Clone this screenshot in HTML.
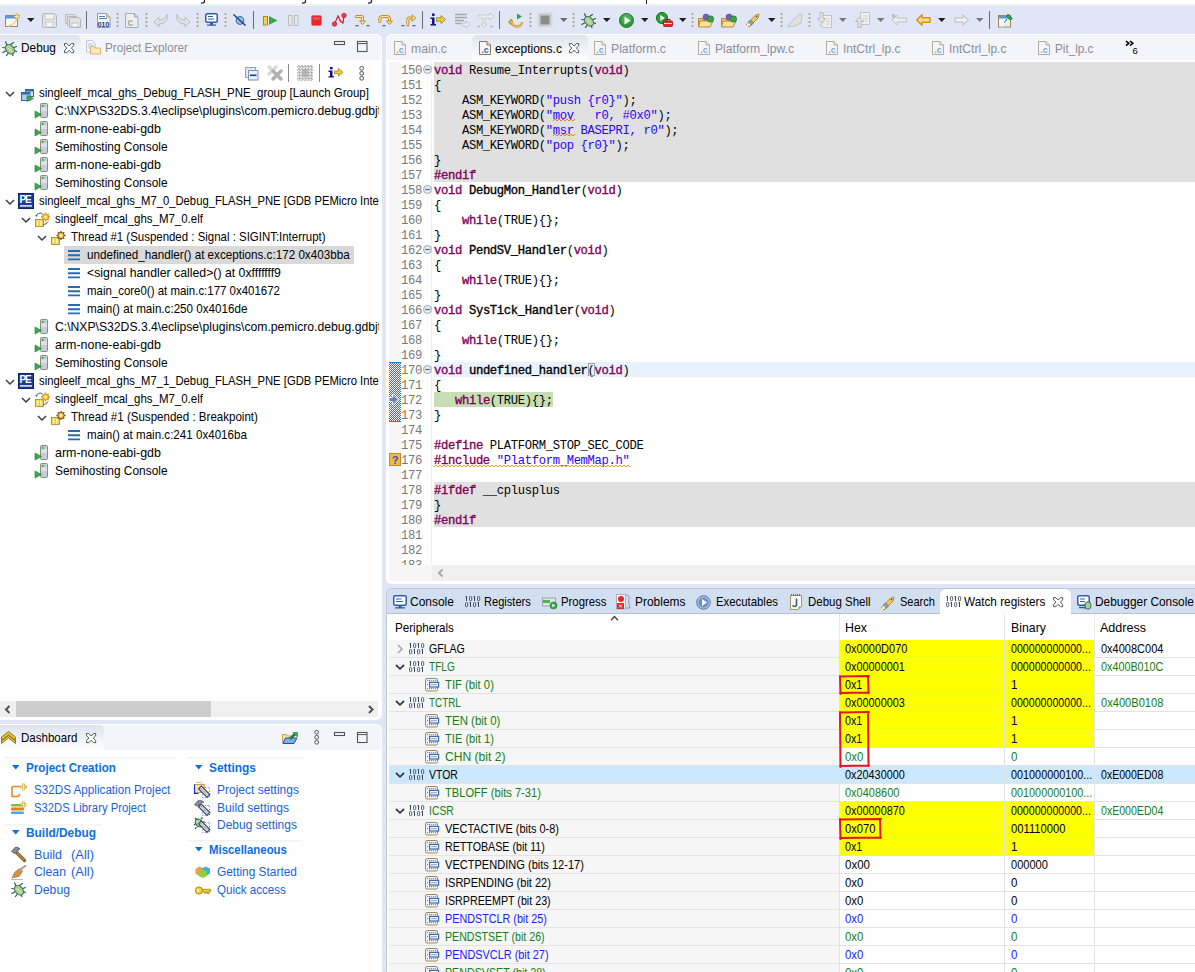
<!DOCTYPE html>
<html><head><meta charset="utf-8"><style>
html,body{margin:0;padding:0}
body{width:1195px;height:972px;overflow:hidden;position:relative;background:#e1e6f6;font-family:"Liberation Sans", sans-serif;}
.t{position:absolute;white-space:pre;line-height:18px;height:18px}
.m{font-family:"Liberation Mono", monospace;}
svg{overflow:visible}
</style></head><body>
<div style="position:absolute;left:0px;top:0px;width:1195px;height:4px;background:#fff"></div><div style="position:absolute;left:0px;top:4px;width:1195px;height:2px;background:#f0f0f0"></div><div style="position:absolute;left:0px;top:34px;width:382px;height:686px;background:#fff;border-radius:0 6px 6px 0"></div><div style="position:absolute;left:0px;top:35px;width:381px;height:25px;background:#f3f5fb;border-radius:0 5px 0 0"></div><div style="position:absolute;left:0px;top:35px;width:81px;height:25px;background:linear-gradient(#dde4ef,#fff);border-radius:0 5px 0 0"></div><div style="position:absolute;left:0px;top:701px;width:378px;height:16px;background:#f0f0f0"></div><div style="position:absolute;left:16px;top:701px;width:195px;height:16px;background:#cdcdcd"></div><div style="position:absolute;left:0px;top:724px;width:382px;height:248px;background:#fff;border-radius:0 6px 0 0"></div><div style="position:absolute;left:0px;top:725px;width:381px;height:25px;background:#f3f5fb;border-radius:0 5px 0 0"></div><div style="position:absolute;left:0px;top:725px;width:104px;height:25px;background:linear-gradient(#dde4ef,#fff);border-radius:0 5px 0 0"></div><div style="position:absolute;left:386px;top:34px;width:809px;height:550px;background:#fff;border-radius:6px 0 0 6px"></div><div style="position:absolute;left:387px;top:35px;width:808px;height:25px;background:#f3f5fb;border-radius:5px 0 0 0"></div><div style="position:absolute;left:472px;top:35px;width:116px;height:25px;background:linear-gradient(#dde4ef,#fff);border-radius:5px 5px 0 0"></div><div style="position:absolute;left:389px;top:62px;width:12px;height:519px;background:#f6f6f6"></div><div style="position:absolute;left:389px;top:565px;width:43px;height:16px;background:#f6f6f6"></div><div style="position:absolute;left:431px;top:62px;width:1px;height:503px;background:#efefef"></div><div style="position:absolute;left:434px;top:62px;width:761px;height:120px;background:#e0e0e0"></div><div style="position:absolute;left:434px;top:482px;width:761px;height:45px;background:#e0e0e0"></div><div style="position:absolute;left:434px;top:362px;width:761px;height:15px;background:#e8f2fe"></div><div style="position:absolute;left:434px;top:392px;width:119px;height:15px;background:#c7ddb3"></div><div style="position:absolute;left:432px;top:565px;width:763px;height:16px;background:#f0f0f0"></div><div style="position:absolute;left:386px;top:588px;width:809px;height:384px;background:#fff;border:1px solid #c0c6d2;border-right:none;border-bottom:none;border-radius:6px 0 0 0;box-sizing:border-box"></div><div style="position:absolute;left:387px;top:589px;width:808px;height:24px;background:#d2dff0;border-radius:5px 0 0 0"></div><div style="position:absolute;left:387px;top:613px;width:808px;height:1px;background:#b4c0d4"></div><div style="position:absolute;left:940px;top:589px;width:131px;height:25px;background:#fff;border-radius:6px 6px 0 0"></div><div style="position:absolute;left:0;top:84px;width:379px;height:400px;overflow:hidden"><div class="t" style="left:39px;top:0px;font-size:12.8px;color:#000;transform:scaleX(0.8987);transform-origin:0 0;">singleelf_mcal_ghs_Debug_FLASH_PNE_group [Launch Group]</div><div class="t" style="left:55px;top:18px;font-size:12.8px;color:#000;transform:scaleX(0.951);transform-origin:0 0">C:\NXP\S32DS.3.4\eclipse\plugins\com.pemicro.debug.gdbjtag.pne_4.7.2</div><div class="t" style="left:55px;top:36px;font-size:12.8px;color:#000;transform:scaleX(0.9737);transform-origin:0 0;">arm-none-eabi-gdb</div><div class="t" style="left:55px;top:54px;font-size:12.8px;color:#000;transform:scaleX(0.9306);transform-origin:0 0;">Semihosting Console</div><div class="t" style="left:55px;top:72px;font-size:12.8px;color:#000;transform:scaleX(0.9737);transform-origin:0 0;">arm-none-eabi-gdb</div><div class="t" style="left:55px;top:90px;font-size:12.8px;color:#000;transform:scaleX(0.9306);transform-origin:0 0;">Semihosting Console</div><div class="t" style="left:39px;top:108px;font-size:12.8px;color:#000;transform:scaleX(0.88);transform-origin:0 0">singleelf_mcal_ghs_M7_0_Debug_FLASH_PNE [GDB PEMicro Interface Debugging]</div><div class="t" style="left:55px;top:126px;font-size:12.8px;color:#000;transform:scaleX(0.8962);transform-origin:0 0;">singleelf_mcal_ghs_M7_0.elf</div><div class="t" style="left:71px;top:144px;font-size:12.8px;color:#000;transform:scaleX(0.8945);transform-origin:0 0;">Thread #1 (Suspended : Signal : SIGINT:Interrupt)</div><div style="position:absolute;left:64px;top:162px;width:290px;height:18px;background:#d9d9d9"></div><div class="t" style="left:87px;top:162px;font-size:12.8px;color:#000;transform:scaleX(0.9114);transform-origin:0 0;">undefined_handler() at exceptions.c:172 0x403bba</div><div class="t" style="left:87px;top:180px;font-size:12.8px;color:#000;transform:scaleX(0.9599);transform-origin:0 0;">&lt;signal handler called&gt;() at 0xfffffff9</div><div class="t" style="left:87px;top:198px;font-size:12.8px;color:#000;transform:scaleX(0.8949);transform-origin:0 0;">main_core0() at main.c:177 0x401672</div><div class="t" style="left:87px;top:216px;font-size:12.8px;color:#000;transform:scaleX(0.9093);transform-origin:0 0;">main() at main.c:250 0x4016de</div><div class="t" style="left:55px;top:234px;font-size:12.8px;color:#000;transform:scaleX(0.951);transform-origin:0 0">C:\NXP\S32DS.3.4\eclipse\plugins\com.pemicro.debug.gdbjtag.pne_4.7.2</div><div class="t" style="left:55px;top:252px;font-size:12.8px;color:#000;transform:scaleX(0.9737);transform-origin:0 0;">arm-none-eabi-gdb</div><div class="t" style="left:55px;top:270px;font-size:12.8px;color:#000;transform:scaleX(0.9306);transform-origin:0 0;">Semihosting Console</div><div class="t" style="left:39px;top:288px;font-size:12.8px;color:#000;transform:scaleX(0.88);transform-origin:0 0">singleelf_mcal_ghs_M7_1_Debug_FLASH_PNE [GDB PEMicro Interface Debugging]</div><div class="t" style="left:55px;top:306px;font-size:12.8px;color:#000;transform:scaleX(0.8962);transform-origin:0 0;">singleelf_mcal_ghs_M7_0.elf</div><div class="t" style="left:71px;top:324px;font-size:12.8px;color:#000;transform:scaleX(0.9029);transform-origin:0 0;">Thread #1 (Suspended : Breakpoint)</div><div class="t" style="left:87px;top:342px;font-size:12.8px;color:#000;transform:scaleX(0.9064);transform-origin:0 0;">main() at main.c:241 0x4016ba</div><div class="t" style="left:55px;top:360px;font-size:12.8px;color:#000;transform:scaleX(0.9737);transform-origin:0 0;">arm-none-eabi-gdb</div><div class="t" style="left:55px;top:378px;font-size:12.8px;color:#000;transform:scaleX(0.9306);transform-origin:0 0;">Semihosting Console</div></div><div style="position:absolute;left:386px;top:62px;width:809px;height:503px;overflow:hidden"><div class="t m" style="left:6px;top:1.5px;width:30px;text-align:right;line-height:15px;height:15px;font-size:12.2px;letter-spacing:-0.33px;color:#787878">150</div><div class="t m" style="left:48px;top:1.5px;line-height:15px;height:15px;font-size:12.2px;letter-spacing:-0.333px;color:#000"><span style="color:#7f0055;-webkit-text-stroke:0.35px #7f0055">void</span><span style=""> </span><span style="">Resume_Interrupts</span><span style="">(</span><span style="color:#7f0055;-webkit-text-stroke:0.35px #7f0055">void</span><span style="">)</span></div><div class="t m" style="left:6px;top:16.5px;width:30px;text-align:right;line-height:15px;height:15px;font-size:12.2px;letter-spacing:-0.33px;color:#787878">151</div><div class="t m" style="left:48px;top:16.5px;line-height:15px;height:15px;font-size:12.2px;letter-spacing:-0.333px;color:#000"><span style="">{</span></div><div class="t m" style="left:6px;top:31.5px;width:30px;text-align:right;line-height:15px;height:15px;font-size:12.2px;letter-spacing:-0.33px;color:#787878">152</div><div class="t m" style="left:48px;top:31.5px;line-height:15px;height:15px;font-size:12.2px;letter-spacing:-0.333px;color:#000"><span style="">    ASM_KEYWORD(</span><span style="color:#2a00ff">&quot;push {r0}&quot;</span><span style="">);</span></div><div class="t m" style="left:6px;top:46.5px;width:30px;text-align:right;line-height:15px;height:15px;font-size:12.2px;letter-spacing:-0.33px;color:#787878">153</div><div class="t m" style="left:48px;top:46.5px;line-height:15px;height:15px;font-size:12.2px;letter-spacing:-0.333px;color:#000"><span style="">    ASM_KEYWORD(</span><span style="color:#2a00ff">&quot;mov   r0, #0x0&quot;</span><span style="">);</span></div><div class="t m" style="left:6px;top:61.5px;width:30px;text-align:right;line-height:15px;height:15px;font-size:12.2px;letter-spacing:-0.33px;color:#787878">154</div><div class="t m" style="left:48px;top:61.5px;line-height:15px;height:15px;font-size:12.2px;letter-spacing:-0.333px;color:#000"><span style="">    ASM_KEYWORD(</span><span style="color:#2a00ff">&quot;msr BASEPRI, r0&quot;</span><span style="">);</span></div><div class="t m" style="left:6px;top:76.5px;width:30px;text-align:right;line-height:15px;height:15px;font-size:12.2px;letter-spacing:-0.33px;color:#787878">155</div><div class="t m" style="left:48px;top:76.5px;line-height:15px;height:15px;font-size:12.2px;letter-spacing:-0.333px;color:#000"><span style="">    ASM_KEYWORD(</span><span style="color:#2a00ff">&quot;pop {r0}&quot;</span><span style="">);</span></div><div class="t m" style="left:6px;top:91.5px;width:30px;text-align:right;line-height:15px;height:15px;font-size:12.2px;letter-spacing:-0.33px;color:#787878">156</div><div class="t m" style="left:48px;top:91.5px;line-height:15px;height:15px;font-size:12.2px;letter-spacing:-0.333px;color:#000"><span style="">}</span></div><div class="t m" style="left:6px;top:106.5px;width:30px;text-align:right;line-height:15px;height:15px;font-size:12.2px;letter-spacing:-0.33px;color:#787878">157</div><div class="t m" style="left:48px;top:106.5px;line-height:15px;height:15px;font-size:12.2px;letter-spacing:-0.333px;color:#000"><span style="color:#7f0055;-webkit-text-stroke:0.35px #7f0055">#endif</span></div><div class="t m" style="left:6px;top:121.5px;width:30px;text-align:right;line-height:15px;height:15px;font-size:12.2px;letter-spacing:-0.33px;color:#787878">158</div><div class="t m" style="left:48px;top:121.5px;line-height:15px;height:15px;font-size:12.2px;letter-spacing:-0.333px;color:#000"><span style="color:#7f0055;-webkit-text-stroke:0.35px #7f0055">void</span><span style=""> </span><span style="-webkit-text-stroke:0.35px #000">DebugMon_Handler</span><span style="">(</span><span style="color:#7f0055;-webkit-text-stroke:0.35px #7f0055">void</span><span style="">)</span></div><div class="t m" style="left:6px;top:136.5px;width:30px;text-align:right;line-height:15px;height:15px;font-size:12.2px;letter-spacing:-0.33px;color:#787878">159</div><div class="t m" style="left:48px;top:136.5px;line-height:15px;height:15px;font-size:12.2px;letter-spacing:-0.333px;color:#000"><span style="">{</span></div><div class="t m" style="left:6px;top:151.5px;width:30px;text-align:right;line-height:15px;height:15px;font-size:12.2px;letter-spacing:-0.33px;color:#787878">160</div><div class="t m" style="left:48px;top:151.5px;line-height:15px;height:15px;font-size:12.2px;letter-spacing:-0.333px;color:#000"><span style="">    </span><span style="color:#7f0055;-webkit-text-stroke:0.35px #7f0055">while</span><span style="">(TRUE){};</span></div><div class="t m" style="left:6px;top:166.5px;width:30px;text-align:right;line-height:15px;height:15px;font-size:12.2px;letter-spacing:-0.33px;color:#787878">161</div><div class="t m" style="left:48px;top:166.5px;line-height:15px;height:15px;font-size:12.2px;letter-spacing:-0.333px;color:#000"><span style="">}</span></div><div class="t m" style="left:6px;top:181.5px;width:30px;text-align:right;line-height:15px;height:15px;font-size:12.2px;letter-spacing:-0.33px;color:#787878">162</div><div class="t m" style="left:48px;top:181.5px;line-height:15px;height:15px;font-size:12.2px;letter-spacing:-0.333px;color:#000"><span style="color:#7f0055;-webkit-text-stroke:0.35px #7f0055">void</span><span style=""> </span><span style="-webkit-text-stroke:0.35px #000">PendSV_Handler</span><span style="">(</span><span style="color:#7f0055;-webkit-text-stroke:0.35px #7f0055">void</span><span style="">)</span></div><div class="t m" style="left:6px;top:196.5px;width:30px;text-align:right;line-height:15px;height:15px;font-size:12.2px;letter-spacing:-0.33px;color:#787878">163</div><div class="t m" style="left:48px;top:196.5px;line-height:15px;height:15px;font-size:12.2px;letter-spacing:-0.333px;color:#000"><span style="">{</span></div><div class="t m" style="left:6px;top:211.5px;width:30px;text-align:right;line-height:15px;height:15px;font-size:12.2px;letter-spacing:-0.33px;color:#787878">164</div><div class="t m" style="left:48px;top:211.5px;line-height:15px;height:15px;font-size:12.2px;letter-spacing:-0.333px;color:#000"><span style="">    </span><span style="color:#7f0055;-webkit-text-stroke:0.35px #7f0055">while</span><span style="">(TRUE){};</span></div><div class="t m" style="left:6px;top:226.5px;width:30px;text-align:right;line-height:15px;height:15px;font-size:12.2px;letter-spacing:-0.33px;color:#787878">165</div><div class="t m" style="left:48px;top:226.5px;line-height:15px;height:15px;font-size:12.2px;letter-spacing:-0.333px;color:#000"><span style="">}</span></div><div class="t m" style="left:6px;top:241.5px;width:30px;text-align:right;line-height:15px;height:15px;font-size:12.2px;letter-spacing:-0.33px;color:#787878">166</div><div class="t m" style="left:48px;top:241.5px;line-height:15px;height:15px;font-size:12.2px;letter-spacing:-0.333px;color:#000"><span style="color:#7f0055;-webkit-text-stroke:0.35px #7f0055">void</span><span style=""> </span><span style="-webkit-text-stroke:0.35px #000">SysTick_Handler</span><span style="">(</span><span style="color:#7f0055;-webkit-text-stroke:0.35px #7f0055">void</span><span style="">)</span></div><div class="t m" style="left:6px;top:256.5px;width:30px;text-align:right;line-height:15px;height:15px;font-size:12.2px;letter-spacing:-0.33px;color:#787878">167</div><div class="t m" style="left:48px;top:256.5px;line-height:15px;height:15px;font-size:12.2px;letter-spacing:-0.333px;color:#000"><span style="">{</span></div><div class="t m" style="left:6px;top:271.5px;width:30px;text-align:right;line-height:15px;height:15px;font-size:12.2px;letter-spacing:-0.33px;color:#787878">168</div><div class="t m" style="left:48px;top:271.5px;line-height:15px;height:15px;font-size:12.2px;letter-spacing:-0.333px;color:#000"><span style="">    </span><span style="color:#7f0055;-webkit-text-stroke:0.35px #7f0055">while</span><span style="">(TRUE){};</span></div><div class="t m" style="left:6px;top:286.5px;width:30px;text-align:right;line-height:15px;height:15px;font-size:12.2px;letter-spacing:-0.33px;color:#787878">169</div><div class="t m" style="left:48px;top:286.5px;line-height:15px;height:15px;font-size:12.2px;letter-spacing:-0.333px;color:#000"><span style="">}</span></div><div class="t m" style="left:6px;top:301.5px;width:30px;text-align:right;line-height:15px;height:15px;font-size:12.2px;letter-spacing:-0.33px;color:#787878">170</div><div class="t m" style="left:48px;top:301.5px;line-height:15px;height:15px;font-size:12.2px;letter-spacing:-0.333px;color:#000"><span style="color:#7f0055;-webkit-text-stroke:0.35px #7f0055">void</span><span style=""> </span><span style="-webkit-text-stroke:0.35px #000">undefined_handler</span><span style="">(</span><span style="color:#7f0055;-webkit-text-stroke:0.35px #7f0055">void</span><span style="">)</span></div><div class="t m" style="left:6px;top:316.5px;width:30px;text-align:right;line-height:15px;height:15px;font-size:12.2px;letter-spacing:-0.33px;color:#787878">171</div><div class="t m" style="left:48px;top:316.5px;line-height:15px;height:15px;font-size:12.2px;letter-spacing:-0.333px;color:#000"><span style="">{</span></div><div class="t m" style="left:6px;top:331.5px;width:30px;text-align:right;line-height:15px;height:15px;font-size:12.2px;letter-spacing:-0.33px;color:#787878">172</div><div class="t m" style="left:48px;top:331.5px;line-height:15px;height:15px;font-size:12.2px;letter-spacing:-0.333px;color:#000"><span style="">   </span><span style="color:#7f0055;-webkit-text-stroke:0.35px #7f0055">while</span><span style="">(TRUE){};</span></div><div class="t m" style="left:6px;top:346.5px;width:30px;text-align:right;line-height:15px;height:15px;font-size:12.2px;letter-spacing:-0.33px;color:#787878">173</div><div class="t m" style="left:48px;top:346.5px;line-height:15px;height:15px;font-size:12.2px;letter-spacing:-0.333px;color:#000"><span style="">}</span></div><div class="t m" style="left:6px;top:361.5px;width:30px;text-align:right;line-height:15px;height:15px;font-size:12.2px;letter-spacing:-0.33px;color:#787878">174</div><div class="t m" style="left:48px;top:361.5px;line-height:15px;height:15px;font-size:12.2px;letter-spacing:-0.333px;color:#000"></div><div class="t m" style="left:6px;top:376.5px;width:30px;text-align:right;line-height:15px;height:15px;font-size:12.2px;letter-spacing:-0.33px;color:#787878">175</div><div class="t m" style="left:48px;top:376.5px;line-height:15px;height:15px;font-size:12.2px;letter-spacing:-0.333px;color:#000"><span style="color:#7f0055;-webkit-text-stroke:0.35px #7f0055">#define</span><span style=""> PLATFORM_STOP_SEC_CODE</span></div><div class="t m" style="left:6px;top:391.5px;width:30px;text-align:right;line-height:15px;height:15px;font-size:12.2px;letter-spacing:-0.33px;color:#787878">176</div><div class="t m" style="left:48px;top:391.5px;line-height:15px;height:15px;font-size:12.2px;letter-spacing:-0.333px;color:#000"><span style="color:#7f0055;-webkit-text-stroke:0.35px #7f0055">#include</span><span style=""> </span><span style="color:#2a00ff">&quot;Platform_MemMap.h&quot;</span></div><div class="t m" style="left:6px;top:406.5px;width:30px;text-align:right;line-height:15px;height:15px;font-size:12.2px;letter-spacing:-0.33px;color:#787878">177</div><div class="t m" style="left:48px;top:406.5px;line-height:15px;height:15px;font-size:12.2px;letter-spacing:-0.333px;color:#000"></div><div class="t m" style="left:6px;top:421.5px;width:30px;text-align:right;line-height:15px;height:15px;font-size:12.2px;letter-spacing:-0.33px;color:#787878">178</div><div class="t m" style="left:48px;top:421.5px;line-height:15px;height:15px;font-size:12.2px;letter-spacing:-0.333px;color:#000"><span style="color:#7f0055;-webkit-text-stroke:0.35px #7f0055">#ifdef</span><span style=""> __cplusplus</span></div><div class="t m" style="left:6px;top:436.5px;width:30px;text-align:right;line-height:15px;height:15px;font-size:12.2px;letter-spacing:-0.33px;color:#787878">179</div><div class="t m" style="left:48px;top:436.5px;line-height:15px;height:15px;font-size:12.2px;letter-spacing:-0.333px;color:#000"><span style="">}</span></div><div class="t m" style="left:6px;top:451.5px;width:30px;text-align:right;line-height:15px;height:15px;font-size:12.2px;letter-spacing:-0.33px;color:#787878">180</div><div class="t m" style="left:48px;top:451.5px;line-height:15px;height:15px;font-size:12.2px;letter-spacing:-0.333px;color:#000"><span style="color:#7f0055;-webkit-text-stroke:0.35px #7f0055">#endif</span></div><div class="t m" style="left:6px;top:466.5px;width:30px;text-align:right;line-height:15px;height:15px;font-size:12.2px;letter-spacing:-0.33px;color:#787878">181</div><div class="t m" style="left:48px;top:466.5px;line-height:15px;height:15px;font-size:12.2px;letter-spacing:-0.333px;color:#000"></div><div class="t m" style="left:6px;top:481.5px;width:30px;text-align:right;line-height:15px;height:15px;font-size:12.2px;letter-spacing:-0.33px;color:#787878">182</div><div class="t m" style="left:48px;top:481.5px;line-height:15px;height:15px;font-size:12.2px;letter-spacing:-0.333px;color:#000"></div><div class="t m" style="left:6px;top:496.5px;width:30px;text-align:right;line-height:15px;height:15px;font-size:12.2px;letter-spacing:-0.33px;color:#787878">183</div><div class="t m" style="left:48px;top:496.5px;line-height:15px;height:15px;font-size:12.2px;letter-spacing:-0.333px;color:#000"></div></div><svg style="position:absolute;left:423px;top:65px" width="9" height="9" viewBox="0 0 9 9"><circle cx="4.5" cy="4.5" r="4" fill="#e6ebf3" stroke="#9aa6b8" stroke-width="1"/><path d="M2.2 4.5h4.6" stroke="#5a6a80" stroke-width="1.2"/></svg><svg style="position:absolute;left:423px;top:185px" width="9" height="9" viewBox="0 0 9 9"><circle cx="4.5" cy="4.5" r="4" fill="#e6ebf3" stroke="#9aa6b8" stroke-width="1"/><path d="M2.2 4.5h4.6" stroke="#5a6a80" stroke-width="1.2"/></svg><svg style="position:absolute;left:423px;top:245px" width="9" height="9" viewBox="0 0 9 9"><circle cx="4.5" cy="4.5" r="4" fill="#e6ebf3" stroke="#9aa6b8" stroke-width="1"/><path d="M2.2 4.5h4.6" stroke="#5a6a80" stroke-width="1.2"/></svg><svg style="position:absolute;left:423px;top:305px" width="9" height="9" viewBox="0 0 9 9"><circle cx="4.5" cy="4.5" r="4" fill="#e6ebf3" stroke="#9aa6b8" stroke-width="1"/><path d="M2.2 4.5h4.6" stroke="#5a6a80" stroke-width="1.2"/></svg><svg style="position:absolute;left:423px;top:365px" width="9" height="9" viewBox="0 0 9 9"><circle cx="4.5" cy="4.5" r="4" fill="#e6ebf3" stroke="#9aa6b8" stroke-width="1"/><path d="M2.2 4.5h4.6" stroke="#5a6a80" stroke-width="1.2"/></svg><svg style="position:absolute;left:389px;top:362px" width="12" height="60"><defs><pattern id="dp" width="2" height="2" patternUnits="userSpaceOnUse"><rect width="2" height="2" fill="#fff"/><rect width="1" height="1" fill="#1f7ae0"/><rect x="1" y="1" width="1" height="1" fill="#1f7ae0"/></pattern></defs><rect width="12" height="60" fill="url(#dp)"/><rect width="12" height="1" fill="#1f7ae0"/><rect y="59" width="12" height="1" fill="#1f7ae0"/><path d="M0 35.5h3.5v-3.5l5.5 5.5-5.5 5.5v-3.5h-3.5z" fill="#5088c8" stroke="#fff" stroke-width="0.9"/></svg><svg style="position:absolute;left:389px;top:453px" width="12" height="13" viewBox="0 0 12 13"><rect x="0.5" y="0.5" width="11" height="12" fill="#f5b94a" stroke="#c8892a"/><text x="6" y="10.5" font-size="11" font-weight="bold" text-anchor="middle" fill="#2a5aa8" font-family="Liberation Sans">?</text></svg><svg style="position:absolute;left:553px;top:119px" width="22" height="3" viewBox="0 0 22 3"><polyline points="0,2 2,0 4,2 6,0 8,2 10,0 12,2 14,0 16,2 18,0 20,2 22,0" fill="none" stroke="#f87038" stroke-width="1"/></svg><svg style="position:absolute;left:553px;top:134px" width="22" height="3" viewBox="0 0 22 3"><polyline points="0,2 2,0 4,2 6,0 8,2 10,0 12,2 14,0 16,2 18,0 20,2 22,0" fill="none" stroke="#f87038" stroke-width="1"/></svg><svg style="position:absolute;left:434px;top:465px" width="196" height="3" viewBox="0 0 196 3"><polyline points="0,2 2,0 4,2 6,0 8,2 10,0 12,2 14,0 16,2 18,0 20,2 22,0 24,2 26,0 28,2 30,0 32,2 34,0 36,2 38,0 40,2 42,0 44,2 46,0 48,2 50,0 52,2 54,0 56,2 58,0 60,2 62,0 64,2 66,0 68,2 70,0 72,2 74,0 76,2 78,0 80,2 82,0 84,2 86,0 88,2 90,0 92,2 94,0 96,2 98,0 100,2 102,0 104,2 106,0 108,2 110,0 112,2 114,0 116,2 118,0 120,2 122,0 124,2 126,0 128,2 130,0 132,2 134,0 136,2 138,0 140,2 142,0 144,2 146,0 148,2 150,0 152,2 154,0 156,2 158,0 160,2 162,0 164,2 166,0 168,2 170,0 172,2 174,0 176,2 178,0 180,2 182,0 184,2 186,0 188,2 190,0 192,2 194,0 196,2" fill="none" stroke="#e8a020" stroke-width="1"/></svg><svg style="position:absolute;left:437px;top:568px" width="7" height="10" viewBox="0 0 7 10"><path d="M5.5 1.5 2 5 5.5 8.5" fill="none" stroke="#a8a8a8" stroke-width="2"/></svg><div class="t" style="left:411px;top:39.5px;font-size:12.8px;color:#8a8e96;transform:scaleX(0.9539);transform-origin:0 0;">main.c</div><svg style="position:absolute;left:394px;top:41px" width="12" height="14" viewBox="0 0 12 14"><g opacity="0.6"><path d="M0.5 0.5h7.5l3.5 3.5v9.5h-11z" fill="#f6f8fc" stroke="#8c7a50"/><path d="M8 0.5v3.5h3.5" fill="#e8d8a8" stroke="#8c7a50"/><text x="6" y="11.5" font-size="9" font-weight="bold" text-anchor="middle" fill="#3a6aa8" font-family="Liberation Sans">.c</text></g></svg><div class="t" style="left:495px;top:39.5px;font-size:12.8px;color:#000;transform:scaleX(0.9411);transform-origin:0 0;">exceptions.c</div><svg style="position:absolute;left:479px;top:41px" width="12" height="14" viewBox="0 0 12 14"><g opacity="1"><path d="M0.5 0.5h7.5l3.5 3.5v9.5h-11z" fill="#f6f8fc" stroke="#8c7a50"/><path d="M8 0.5v3.5h3.5" fill="#e8d8a8" stroke="#8c7a50"/><text x="6" y="11.5" font-size="9" font-weight="bold" text-anchor="middle" fill="#3a6aa8" font-family="Liberation Sans">.c</text></g></svg><div class="t" style="left:611px;top:39.5px;font-size:12.8px;color:#8a8e96;transform:scaleX(0.9541);transform-origin:0 0;">Platform.c</div><svg style="position:absolute;left:594px;top:41px" width="12" height="14" viewBox="0 0 12 14"><g opacity="0.6"><path d="M0.5 0.5h7.5l3.5 3.5v9.5h-11z" fill="#f6f8fc" stroke="#8c7a50"/><path d="M8 0.5v3.5h3.5" fill="#e8d8a8" stroke="#8c7a50"/><text x="6" y="11.5" font-size="9" font-weight="bold" text-anchor="middle" fill="#3a6aa8" font-family="Liberation Sans">.c</text></g></svg><div class="t" style="left:715px;top:39.5px;font-size:12.8px;color:#8a8e96;transform:scaleX(0.9488);transform-origin:0 0;">Platform_lpw.c</div><svg style="position:absolute;left:698px;top:41px" width="12" height="14" viewBox="0 0 12 14"><g opacity="0.6"><path d="M0.5 0.5h7.5l3.5 3.5v9.5h-11z" fill="#f6f8fc" stroke="#8c7a50"/><path d="M8 0.5v3.5h3.5" fill="#e8d8a8" stroke="#8c7a50"/><text x="6" y="11.5" font-size="9" font-weight="bold" text-anchor="middle" fill="#3a6aa8" font-family="Liberation Sans">.c</text></g></svg><div class="t" style="left:843px;top:39.5px;font-size:12.8px;color:#8a8e96;transform:scaleX(0.9392);transform-origin:0 0;">IntCtrl_lp.c</div><svg style="position:absolute;left:826px;top:41px" width="12" height="14" viewBox="0 0 12 14"><g opacity="0.6"><path d="M0.5 0.5h7.5l3.5 3.5v9.5h-11z" fill="#f6f8fc" stroke="#8c7a50"/><path d="M8 0.5v3.5h3.5" fill="#e8d8a8" stroke="#8c7a50"/><text x="6" y="11.5" font-size="9" font-weight="bold" text-anchor="middle" fill="#3a6aa8" font-family="Liberation Sans">.c</text></g></svg><div class="t" style="left:949px;top:39.5px;font-size:12.8px;color:#8a8e96;transform:scaleX(0.9392);transform-origin:0 0;">IntCtrl_lp.c</div><svg style="position:absolute;left:932px;top:41px" width="12" height="14" viewBox="0 0 12 14"><g opacity="0.6"><path d="M0.5 0.5h7.5l3.5 3.5v9.5h-11z" fill="#f6f8fc" stroke="#8c7a50"/><path d="M8 0.5v3.5h3.5" fill="#e8d8a8" stroke="#8c7a50"/><text x="6" y="11.5" font-size="9" font-weight="bold" text-anchor="middle" fill="#3a6aa8" font-family="Liberation Sans">.c</text></g></svg><div class="t" style="left:1055px;top:39.5px;font-size:12.8px;color:#8a8e96;transform:scaleX(0.9154);transform-origin:0 0;">Pit_lp.c</div><svg style="position:absolute;left:1038px;top:41px" width="12" height="14" viewBox="0 0 12 14"><g opacity="0.6"><path d="M0.5 0.5h7.5l3.5 3.5v9.5h-11z" fill="#f6f8fc" stroke="#8c7a50"/><path d="M8 0.5v3.5h3.5" fill="#e8d8a8" stroke="#8c7a50"/><text x="6" y="11.5" font-size="9" font-weight="bold" text-anchor="middle" fill="#3a6aa8" font-family="Liberation Sans">.c</text></g></svg><svg style="position:absolute;left:568.5px;top:42.5px" width="11" height="11" viewBox="0 0 11 11"><g transform="scale(0.93)"><path d="M0.6 0.6H3L5.5 3.2 8 0.6H10.4V3L7.8 5.5 10.4 8V10.4H8L5.5 7.8 3 10.4H0.6V8L3.2 5.5 0.6 3Z" fill="#fff" stroke="#505050" stroke-width="1.05" stroke-linejoin="round"/></g></svg><svg style="position:absolute;left:1125px;top:40px" width="10" height="7" viewBox="0 0 10 7"><path d="M1 1 3.8 3.3 1 5.6M5 1 7.8 3.3 5 5.6" fill="none" stroke="#000" stroke-width="1.6"/></svg><div class="t" style="left:1132.5px;top:42px;font-size:9.5px;color:#000;">6</div><div class="t" style="left:410px;top:593px;font-size:12.8px;color:#000;transform:scaleX(0.9358);transform-origin:0 0;">Console</div><div class="t" style="left:484px;top:593px;font-size:12.8px;color:#000;transform:scaleX(0.8671);transform-origin:0 0;">Registers</div><div class="t" style="left:561px;top:593px;font-size:12.8px;color:#000;transform:scaleX(0.8863);transform-origin:0 0;">Progress</div><div class="t" style="left:635px;top:593px;font-size:12.8px;color:#000;transform:scaleX(0.9331);transform-origin:0 0;">Problems</div><div class="t" style="left:715.5px;top:593px;font-size:12.8px;color:#000;transform:scaleX(0.8877);transform-origin:0 0;">Executables</div><div class="t" style="left:808px;top:593px;font-size:12.8px;color:#000;transform:scaleX(0.8964);transform-origin:0 0;">Debug Shell</div><div class="t" style="left:899.6px;top:593px;font-size:12.8px;color:#000;transform:scaleX(0.8598);transform-origin:0 0;">Search</div><div class="t" style="left:964px;top:593px;font-size:12.8px;color:#000;transform:scaleX(0.9197);transform-origin:0 0;">Watch registers</div><div class="t" style="left:1094.7px;top:593px;font-size:12.8px;color:#000;transform:scaleX(0.9271);transform-origin:0 0;">Debugger Console</div><svg style="position:absolute;left:1052.5px;top:597px" width="11" height="11" viewBox="0 0 11 11"><g transform="scale(0.93)"><path d="M0.6 0.6H3L5.5 3.2 8 0.6H10.4V3L7.8 5.5 10.4 8V10.4H8L5.5 7.8 3 10.4H0.6V8L3.2 5.5 0.6 3Z" fill="#fff" stroke="#505050" stroke-width="1.05" stroke-linejoin="round"/></g></svg><div style="position:absolute;left:387px;top:614px;width:808px;height:26px;background:#fff"></div><div class="t" style="left:395px;top:619px;font-size:12.8px;color:#000;transform:scaleX(0.9101);transform-origin:0 0;">Peripherals</div><div class="t" style="left:845px;top:619px;font-size:12.8px;color:#000;transform:scaleX(0.9652);transform-origin:0 0;">Hex</div><div class="t" style="left:1011px;top:619px;font-size:12.8px;color:#000;transform:scaleX(0.9639);transform-origin:0 0;">Binary</div><div class="t" style="left:1100px;top:619px;font-size:12.8px;color:#000;transform:scaleX(0.9794);transform-origin:0 0;">Address</div><svg style="position:absolute;left:610px;top:615px" width="10" height="7" viewBox="0 0 10 7"><path d="M1 5.3 4.5 1.5 8 5.3" fill="none" stroke="#404040" stroke-width="1.3"/></svg><div style="position:absolute;left:839px;top:614px;width:1px;height:26px;background:#e8e8e8"></div><div style="position:absolute;left:1004px;top:614px;width:1px;height:26px;background:#e8e8e8"></div><div style="position:absolute;left:1094px;top:614px;width:1px;height:26px;background:#e8e8e8"></div><div style="position:absolute;left:389px;top:640px;width:450px;height:17px;background:#f6f6f6"></div><div style="position:absolute;left:840px;top:640px;width:164px;height:17px;background:#ffff00"></div><div style="position:absolute;left:1005px;top:640px;width:89px;height:17px;background:#ffff00"></div><div style="position:absolute;left:1095px;top:640px;width:100px;height:17px;background:#fff"></div><div style="position:absolute;left:389px;top:657px;width:806px;height:1px;background:#e3e3e3"></div><div style="position:absolute;left:839px;top:640px;width:1px;height:17px;background:#e3e3e3"></div><div style="position:absolute;left:1004px;top:640px;width:1px;height:17px;background:#e3e3e3"></div><div style="position:absolute;left:1094px;top:640px;width:1px;height:17px;background:#e3e3e3"></div><div class="t" style="left:429px;top:639.5px;font-size:12.8px;color:#000;transform:scaleX(0.8259);transform-origin:0 0;">GFLAG</div><div class="t" style="left:845px;top:639.5px;font-size:12.8px;color:#000;transform:scaleX(0.8592);transform-origin:0 0;">0x0000D070</div><div class="t" style="left:1011px;top:639.5px;font-size:12.8px;color:#000;transform:scaleX(0.8310);transform-origin:0 0;">000000000000...</div><div class="t" style="left:1100.5px;top:639.5px;font-size:12.8px;color:#000;transform:scaleX(0.8592);transform-origin:0 0;">0x4008C004</div><svg style="position:absolute;left:396px;top:644px" width="8" height="10" viewBox="0 0 8 10"><path d="M2 1 6 5 2 9" fill="none" stroke="#a8a8a8" stroke-width="1.6"/></svg><svg style="position:absolute;left:409px;top:643px" width="16" height="12" viewBox="0 0 16 12"><path d="M1.5 0 v5 M0.5 0.8 h1" stroke="#3c4a66" stroke-width="1" fill="none"/><rect x="4.5" y="0.5" width="2.2" height="4.2" rx="1" fill="none" stroke="#3c4a66" stroke-width="0.9"/><path d="M9.5 0 v5 M8.5 0.8 h1" stroke="#3c4a66" stroke-width="1" fill="none"/><rect x="12.5" y="0.5" width="2.2" height="4.2" rx="1" fill="none" stroke="#3c4a66" stroke-width="0.9"/><rect x="0.5" y="6.5" width="2.2" height="4.2" rx="1" fill="none" stroke="#3c4a66" stroke-width="0.9"/><path d="M5.5 6 v5 M4.5 6.8 h1" stroke="#3c4a66" stroke-width="1" fill="none"/><rect x="8.5" y="6.5" width="2.2" height="4.2" rx="1" fill="none" stroke="#3c4a66" stroke-width="0.9"/><path d="M13.5 6 v5 M12.5 6.8 h1" stroke="#3c4a66" stroke-width="1" fill="none"/></svg><div style="position:absolute;left:389px;top:658px;width:450px;height:17px;background:#f6f6f6"></div><div style="position:absolute;left:840px;top:658px;width:164px;height:17px;background:#ffff00"></div><div style="position:absolute;left:1005px;top:658px;width:89px;height:17px;background:#ffff00"></div><div style="position:absolute;left:1095px;top:658px;width:100px;height:17px;background:#fff"></div><div style="position:absolute;left:389px;top:675px;width:806px;height:1px;background:#e3e3e3"></div><div style="position:absolute;left:839px;top:658px;width:1px;height:17px;background:#e3e3e3"></div><div style="position:absolute;left:1004px;top:658px;width:1px;height:17px;background:#e3e3e3"></div><div style="position:absolute;left:1094px;top:658px;width:1px;height:17px;background:#e3e3e3"></div><div class="t" style="left:429px;top:657.5px;font-size:12.8px;color:#138013;transform:scaleX(0.7885);transform-origin:0 0;">TFLG</div><div class="t" style="left:845px;top:657.5px;font-size:12.8px;color:#000;transform:scaleX(0.8495);transform-origin:0 0;">0x00000001</div><div class="t" style="left:1011px;top:657.5px;font-size:12.8px;color:#000;transform:scaleX(0.8310);transform-origin:0 0;">000000000000...</div><div class="t" style="left:1100.5px;top:657.5px;font-size:12.8px;color:#138013;transform:scaleX(0.8425);transform-origin:0 0;">0x400B010C</div><svg style="position:absolute;left:395px;top:664px" width="10" height="7" viewBox="0 0 10 7"><path d="M1 1 5 4.8 9 1" fill="none" stroke="#3a3a3a" stroke-width="1.8"/></svg><svg style="position:absolute;left:409px;top:661px" width="16" height="12" viewBox="0 0 16 12"><path d="M1.5 0 v5 M0.5 0.8 h1" stroke="#3c4a66" stroke-width="1" fill="none"/><rect x="4.5" y="0.5" width="2.2" height="4.2" rx="1" fill="none" stroke="#3c4a66" stroke-width="0.9"/><path d="M9.5 0 v5 M8.5 0.8 h1" stroke="#3c4a66" stroke-width="1" fill="none"/><rect x="12.5" y="0.5" width="2.2" height="4.2" rx="1" fill="none" stroke="#3c4a66" stroke-width="0.9"/><rect x="0.5" y="6.5" width="2.2" height="4.2" rx="1" fill="none" stroke="#3c4a66" stroke-width="0.9"/><path d="M5.5 6 v5 M4.5 6.8 h1" stroke="#3c4a66" stroke-width="1" fill="none"/><rect x="8.5" y="6.5" width="2.2" height="4.2" rx="1" fill="none" stroke="#3c4a66" stroke-width="0.9"/><path d="M13.5 6 v5 M12.5 6.8 h1" stroke="#3c4a66" stroke-width="1" fill="none"/></svg><div style="position:absolute;left:389px;top:676px;width:450px;height:17px;background:#f6f6f6"></div><div style="position:absolute;left:840px;top:676px;width:164px;height:17px;background:#ffff00"></div><div style="position:absolute;left:1005px;top:676px;width:89px;height:17px;background:#ffff00"></div><div style="position:absolute;left:1095px;top:676px;width:100px;height:17px;background:#fff"></div><div style="position:absolute;left:389px;top:693px;width:806px;height:1px;background:#e3e3e3"></div><div style="position:absolute;left:839px;top:676px;width:1px;height:17px;background:#e3e3e3"></div><div style="position:absolute;left:1004px;top:676px;width:1px;height:17px;background:#e3e3e3"></div><div style="position:absolute;left:1094px;top:676px;width:1px;height:17px;background:#e3e3e3"></div><div class="t" style="left:445px;top:675.5px;font-size:12.8px;color:#138013;transform:scaleX(0.8815);transform-origin:0 0;">TIF (bit 0)</div><div class="t" style="left:845px;top:675.5px;font-size:12.8px;color:#000;transform:scaleX(0.8404);transform-origin:0 0;">0x1</div><div class="t" style="left:1011px;top:675.5px;font-size:12.8px;color:#000;transform:scaleX(0.9);transform-origin:0 0">1</div><svg style="position:absolute;left:425px;top:677.5px" width="15" height="14" viewBox="0 0 15 14"><rect x="0.5" y="0.5" width="12" height="12.5" rx="1.5" fill="#eef4fc" stroke="#a8884a"/><circle cx="2.6" cy="2.6" r="0.6" fill="#5a7ab0"/><circle cx="2.6" cy="10.6" r="0.6" fill="#5a7ab0"/><circle cx="4.6" cy="2.6" r="0.6" fill="#5a7ab0"/><circle cx="4.6" cy="10.6" r="0.6" fill="#5a7ab0"/><circle cx="6.6" cy="2.6" r="0.6" fill="#5a7ab0"/><circle cx="6.6" cy="10.6" r="0.6" fill="#5a7ab0"/><circle cx="8.6" cy="2.6" r="0.6" fill="#5a7ab0"/><circle cx="8.6" cy="10.6" r="0.6" fill="#5a7ab0"/><circle cx="10.6" cy="2.6" r="0.6" fill="#5a7ab0"/><circle cx="10.6" cy="10.6" r="0.6" fill="#5a7ab0"/><circle cx="2.6" cy="6.6" r="0.6" fill="#5a7ab0"/><rect x="4.6" y="4.4" width="9" height="4.6" fill="#fff" stroke="#3a6ab0" stroke-width="1.2"/><circle cx="7" cy="6.7" r="0.6" fill="#2a4a90"/><circle cx="9" cy="6.7" r="0.6" fill="#2a4a90"/><circle cx="11" cy="6.7" r="0.6" fill="#2a4a90"/></svg><div style="position:absolute;left:389px;top:694px;width:450px;height:17px;background:#f6f6f6"></div><div style="position:absolute;left:840px;top:694px;width:164px;height:17px;background:#ffff00"></div><div style="position:absolute;left:1005px;top:694px;width:89px;height:17px;background:#ffff00"></div><div style="position:absolute;left:1095px;top:694px;width:100px;height:17px;background:#fff"></div><div style="position:absolute;left:389px;top:711px;width:806px;height:1px;background:#e3e3e3"></div><div style="position:absolute;left:839px;top:694px;width:1px;height:17px;background:#e3e3e3"></div><div style="position:absolute;left:1004px;top:694px;width:1px;height:17px;background:#e3e3e3"></div><div style="position:absolute;left:1094px;top:694px;width:1px;height:17px;background:#e3e3e3"></div><div class="t" style="left:429px;top:693.5px;font-size:12.8px;color:#138013;transform:scaleX(0.7705);transform-origin:0 0;">TCTRL</div><div class="t" style="left:845px;top:693.5px;font-size:12.8px;color:#000;transform:scaleX(0.8495);transform-origin:0 0;">0x00000003</div><div class="t" style="left:1011px;top:693.5px;font-size:12.8px;color:#000;transform:scaleX(0.8310);transform-origin:0 0;">000000000000...</div><div class="t" style="left:1100.5px;top:693.5px;font-size:12.8px;color:#138013;transform:scaleX(0.8678);transform-origin:0 0;">0x400B0108</div><svg style="position:absolute;left:395px;top:700px" width="10" height="7" viewBox="0 0 10 7"><path d="M1 1 5 4.8 9 1" fill="none" stroke="#3a3a3a" stroke-width="1.8"/></svg><svg style="position:absolute;left:409px;top:697px" width="16" height="12" viewBox="0 0 16 12"><path d="M1.5 0 v5 M0.5 0.8 h1" stroke="#3c4a66" stroke-width="1" fill="none"/><rect x="4.5" y="0.5" width="2.2" height="4.2" rx="1" fill="none" stroke="#3c4a66" stroke-width="0.9"/><path d="M9.5 0 v5 M8.5 0.8 h1" stroke="#3c4a66" stroke-width="1" fill="none"/><rect x="12.5" y="0.5" width="2.2" height="4.2" rx="1" fill="none" stroke="#3c4a66" stroke-width="0.9"/><rect x="0.5" y="6.5" width="2.2" height="4.2" rx="1" fill="none" stroke="#3c4a66" stroke-width="0.9"/><path d="M5.5 6 v5 M4.5 6.8 h1" stroke="#3c4a66" stroke-width="1" fill="none"/><rect x="8.5" y="6.5" width="2.2" height="4.2" rx="1" fill="none" stroke="#3c4a66" stroke-width="0.9"/><path d="M13.5 6 v5 M12.5 6.8 h1" stroke="#3c4a66" stroke-width="1" fill="none"/></svg><div style="position:absolute;left:389px;top:712px;width:450px;height:17px;background:#f6f6f6"></div><div style="position:absolute;left:840px;top:712px;width:164px;height:17px;background:#ffff00"></div><div style="position:absolute;left:1005px;top:712px;width:89px;height:17px;background:#ffff00"></div><div style="position:absolute;left:1095px;top:712px;width:100px;height:17px;background:#fff"></div><div style="position:absolute;left:389px;top:729px;width:806px;height:1px;background:#e3e3e3"></div><div style="position:absolute;left:839px;top:712px;width:1px;height:17px;background:#e3e3e3"></div><div style="position:absolute;left:1004px;top:712px;width:1px;height:17px;background:#e3e3e3"></div><div style="position:absolute;left:1094px;top:712px;width:1px;height:17px;background:#e3e3e3"></div><div class="t" style="left:445px;top:711.5px;font-size:12.8px;color:#138013;transform:scaleX(0.8955);transform-origin:0 0;">TEN (bit 0)</div><div class="t" style="left:845px;top:711.5px;font-size:12.8px;color:#000;transform:scaleX(0.8404);transform-origin:0 0;">0x1</div><div class="t" style="left:1011px;top:711.5px;font-size:12.8px;color:#000;transform:scaleX(0.9);transform-origin:0 0">1</div><svg style="position:absolute;left:425px;top:713.5px" width="15" height="14" viewBox="0 0 15 14"><rect x="0.5" y="0.5" width="12" height="12.5" rx="1.5" fill="#eef4fc" stroke="#a8884a"/><circle cx="2.6" cy="2.6" r="0.6" fill="#5a7ab0"/><circle cx="2.6" cy="10.6" r="0.6" fill="#5a7ab0"/><circle cx="4.6" cy="2.6" r="0.6" fill="#5a7ab0"/><circle cx="4.6" cy="10.6" r="0.6" fill="#5a7ab0"/><circle cx="6.6" cy="2.6" r="0.6" fill="#5a7ab0"/><circle cx="6.6" cy="10.6" r="0.6" fill="#5a7ab0"/><circle cx="8.6" cy="2.6" r="0.6" fill="#5a7ab0"/><circle cx="8.6" cy="10.6" r="0.6" fill="#5a7ab0"/><circle cx="10.6" cy="2.6" r="0.6" fill="#5a7ab0"/><circle cx="10.6" cy="10.6" r="0.6" fill="#5a7ab0"/><circle cx="2.6" cy="6.6" r="0.6" fill="#5a7ab0"/><rect x="4.6" y="4.4" width="9" height="4.6" fill="#fff" stroke="#3a6ab0" stroke-width="1.2"/><circle cx="7" cy="6.7" r="0.6" fill="#2a4a90"/><circle cx="9" cy="6.7" r="0.6" fill="#2a4a90"/><circle cx="11" cy="6.7" r="0.6" fill="#2a4a90"/></svg><div style="position:absolute;left:389px;top:730px;width:450px;height:17px;background:#f6f6f6"></div><div style="position:absolute;left:840px;top:730px;width:164px;height:17px;background:#ffff00"></div><div style="position:absolute;left:1005px;top:730px;width:89px;height:17px;background:#ffff00"></div><div style="position:absolute;left:1095px;top:730px;width:100px;height:17px;background:#fff"></div><div style="position:absolute;left:389px;top:747px;width:806px;height:1px;background:#e3e3e3"></div><div style="position:absolute;left:839px;top:730px;width:1px;height:17px;background:#e3e3e3"></div><div style="position:absolute;left:1004px;top:730px;width:1px;height:17px;background:#e3e3e3"></div><div style="position:absolute;left:1094px;top:730px;width:1px;height:17px;background:#e3e3e3"></div><div class="t" style="left:445px;top:729.5px;font-size:12.8px;color:#138013;transform:scaleX(0.8700);transform-origin:0 0;">TIE (bit 1)</div><div class="t" style="left:845px;top:729.5px;font-size:12.8px;color:#000;transform:scaleX(0.8404);transform-origin:0 0;">0x1</div><div class="t" style="left:1011px;top:729.5px;font-size:12.8px;color:#000;transform:scaleX(0.9);transform-origin:0 0">1</div><svg style="position:absolute;left:425px;top:731.5px" width="15" height="14" viewBox="0 0 15 14"><rect x="0.5" y="0.5" width="12" height="12.5" rx="1.5" fill="#eef4fc" stroke="#a8884a"/><circle cx="2.6" cy="2.6" r="0.6" fill="#5a7ab0"/><circle cx="2.6" cy="10.6" r="0.6" fill="#5a7ab0"/><circle cx="4.6" cy="2.6" r="0.6" fill="#5a7ab0"/><circle cx="4.6" cy="10.6" r="0.6" fill="#5a7ab0"/><circle cx="6.6" cy="2.6" r="0.6" fill="#5a7ab0"/><circle cx="6.6" cy="10.6" r="0.6" fill="#5a7ab0"/><circle cx="8.6" cy="2.6" r="0.6" fill="#5a7ab0"/><circle cx="8.6" cy="10.6" r="0.6" fill="#5a7ab0"/><circle cx="10.6" cy="2.6" r="0.6" fill="#5a7ab0"/><circle cx="10.6" cy="10.6" r="0.6" fill="#5a7ab0"/><circle cx="2.6" cy="6.6" r="0.6" fill="#5a7ab0"/><rect x="4.6" y="4.4" width="9" height="4.6" fill="#fff" stroke="#3a6ab0" stroke-width="1.2"/><circle cx="7" cy="6.7" r="0.6" fill="#2a4a90"/><circle cx="9" cy="6.7" r="0.6" fill="#2a4a90"/><circle cx="11" cy="6.7" r="0.6" fill="#2a4a90"/></svg><div style="position:absolute;left:389px;top:748px;width:450px;height:17px;background:#f6f6f6"></div><div style="position:absolute;left:840px;top:748px;width:164px;height:17px;background:#fff"></div><div style="position:absolute;left:1005px;top:748px;width:89px;height:17px;background:#fff"></div><div style="position:absolute;left:1095px;top:748px;width:100px;height:17px;background:#fff"></div><div style="position:absolute;left:389px;top:765px;width:806px;height:1px;background:#e3e3e3"></div><div style="position:absolute;left:839px;top:748px;width:1px;height:17px;background:#e3e3e3"></div><div style="position:absolute;left:1004px;top:748px;width:1px;height:17px;background:#e3e3e3"></div><div style="position:absolute;left:1094px;top:748px;width:1px;height:17px;background:#e3e3e3"></div><div class="t" style="left:445px;top:747.5px;font-size:12.8px;color:#138013;transform:scaleX(0.9446);transform-origin:0 0;">CHN (bit 2)</div><div class="t" style="left:845px;top:747.5px;font-size:12.8px;color:#138013;transform:scaleX(0.8914);transform-origin:0 0;">0x0</div><div class="t" style="left:1011px;top:747.5px;font-size:12.8px;color:#138013;transform:scaleX(0.9);transform-origin:0 0">0</div><svg style="position:absolute;left:425px;top:749.5px" width="15" height="14" viewBox="0 0 15 14"><rect x="0.5" y="0.5" width="12" height="12.5" rx="1.5" fill="#eef4fc" stroke="#a8884a"/><circle cx="2.6" cy="2.6" r="0.6" fill="#5a7ab0"/><circle cx="2.6" cy="10.6" r="0.6" fill="#5a7ab0"/><circle cx="4.6" cy="2.6" r="0.6" fill="#5a7ab0"/><circle cx="4.6" cy="10.6" r="0.6" fill="#5a7ab0"/><circle cx="6.6" cy="2.6" r="0.6" fill="#5a7ab0"/><circle cx="6.6" cy="10.6" r="0.6" fill="#5a7ab0"/><circle cx="8.6" cy="2.6" r="0.6" fill="#5a7ab0"/><circle cx="8.6" cy="10.6" r="0.6" fill="#5a7ab0"/><circle cx="10.6" cy="2.6" r="0.6" fill="#5a7ab0"/><circle cx="10.6" cy="10.6" r="0.6" fill="#5a7ab0"/><circle cx="2.6" cy="6.6" r="0.6" fill="#5a7ab0"/><rect x="4.6" y="4.4" width="9" height="4.6" fill="#fff" stroke="#3a6ab0" stroke-width="1.2"/><circle cx="7" cy="6.7" r="0.6" fill="#2a4a90"/><circle cx="9" cy="6.7" r="0.6" fill="#2a4a90"/><circle cx="11" cy="6.7" r="0.6" fill="#2a4a90"/></svg><div style="position:absolute;left:389px;top:766px;width:450px;height:17px;background:#cce8ff"></div><div style="position:absolute;left:840px;top:766px;width:164px;height:17px;background:#cce8ff"></div><div style="position:absolute;left:1005px;top:766px;width:89px;height:17px;background:#cce8ff"></div><div style="position:absolute;left:1095px;top:766px;width:100px;height:17px;background:#cce8ff"></div><div style="position:absolute;left:389px;top:783px;width:806px;height:1px;background:#e3e3e3"></div><div style="position:absolute;left:839px;top:766px;width:1px;height:17px;background:#e3e3e3"></div><div style="position:absolute;left:1004px;top:766px;width:1px;height:17px;background:#e3e3e3"></div><div style="position:absolute;left:1094px;top:766px;width:1px;height:17px;background:#e3e3e3"></div><div class="t" style="left:429px;top:765.5px;font-size:12.8px;color:#000;transform:scaleX(0.8159);transform-origin:0 0;">VTOR</div><div class="t" style="left:845px;top:765.5px;font-size:12.8px;color:#000;transform:scaleX(0.8495);transform-origin:0 0;">0x20430000</div><div class="t" style="left:1011px;top:765.5px;font-size:12.8px;color:#000;transform:scaleX(0.8467);transform-origin:0 0;">001000000100...</div><div class="t" style="left:1100.5px;top:765.5px;font-size:12.8px;color:#000;transform:scaleX(0.8265);transform-origin:0 0;">0xE000ED08</div><svg style="position:absolute;left:395px;top:772px" width="10" height="7" viewBox="0 0 10 7"><path d="M1 1 5 4.8 9 1" fill="none" stroke="#3a3a3a" stroke-width="1.8"/></svg><svg style="position:absolute;left:409px;top:769px" width="16" height="12" viewBox="0 0 16 12"><path d="M1.5 0 v5 M0.5 0.8 h1" stroke="#3c4a66" stroke-width="1" fill="none"/><rect x="4.5" y="0.5" width="2.2" height="4.2" rx="1" fill="none" stroke="#3c4a66" stroke-width="0.9"/><path d="M9.5 0 v5 M8.5 0.8 h1" stroke="#3c4a66" stroke-width="1" fill="none"/><rect x="12.5" y="0.5" width="2.2" height="4.2" rx="1" fill="none" stroke="#3c4a66" stroke-width="0.9"/><rect x="0.5" y="6.5" width="2.2" height="4.2" rx="1" fill="none" stroke="#3c4a66" stroke-width="0.9"/><path d="M5.5 6 v5 M4.5 6.8 h1" stroke="#3c4a66" stroke-width="1" fill="none"/><rect x="8.5" y="6.5" width="2.2" height="4.2" rx="1" fill="none" stroke="#3c4a66" stroke-width="0.9"/><path d="M13.5 6 v5 M12.5 6.8 h1" stroke="#3c4a66" stroke-width="1" fill="none"/></svg><div style="position:absolute;left:389px;top:784px;width:450px;height:17px;background:#f6f6f6"></div><div style="position:absolute;left:840px;top:784px;width:164px;height:17px;background:#fff"></div><div style="position:absolute;left:1005px;top:784px;width:89px;height:17px;background:#fff"></div><div style="position:absolute;left:1095px;top:784px;width:100px;height:17px;background:#fff"></div><div style="position:absolute;left:389px;top:801px;width:806px;height:1px;background:#e3e3e3"></div><div style="position:absolute;left:839px;top:784px;width:1px;height:17px;background:#e3e3e3"></div><div style="position:absolute;left:1004px;top:784px;width:1px;height:17px;background:#e3e3e3"></div><div style="position:absolute;left:1094px;top:784px;width:1px;height:17px;background:#e3e3e3"></div><div class="t" style="left:445px;top:783.5px;font-size:12.8px;color:#138013;transform:scaleX(0.8698);transform-origin:0 0;">TBLOFF (bits 7-31)</div><div class="t" style="left:845px;top:783.5px;font-size:12.8px;color:#138013;transform:scaleX(0.8583);transform-origin:0 0;">0x0408600</div><div class="t" style="left:1011px;top:783.5px;font-size:12.8px;color:#138013;transform:scaleX(0.8467);transform-origin:0 0;">001000000100...</div><svg style="position:absolute;left:425px;top:785.5px" width="15" height="14" viewBox="0 0 15 14"><rect x="0.5" y="0.5" width="12" height="12.5" rx="1.5" fill="#eef4fc" stroke="#a8884a"/><circle cx="2.6" cy="2.6" r="0.6" fill="#5a7ab0"/><circle cx="2.6" cy="10.6" r="0.6" fill="#5a7ab0"/><circle cx="4.6" cy="2.6" r="0.6" fill="#5a7ab0"/><circle cx="4.6" cy="10.6" r="0.6" fill="#5a7ab0"/><circle cx="6.6" cy="2.6" r="0.6" fill="#5a7ab0"/><circle cx="6.6" cy="10.6" r="0.6" fill="#5a7ab0"/><circle cx="8.6" cy="2.6" r="0.6" fill="#5a7ab0"/><circle cx="8.6" cy="10.6" r="0.6" fill="#5a7ab0"/><circle cx="10.6" cy="2.6" r="0.6" fill="#5a7ab0"/><circle cx="10.6" cy="10.6" r="0.6" fill="#5a7ab0"/><circle cx="2.6" cy="6.6" r="0.6" fill="#5a7ab0"/><rect x="4.6" y="4.4" width="9" height="4.6" fill="#fff" stroke="#3a6ab0" stroke-width="1.2"/><circle cx="7" cy="6.7" r="0.6" fill="#2a4a90"/><circle cx="9" cy="6.7" r="0.6" fill="#2a4a90"/><circle cx="11" cy="6.7" r="0.6" fill="#2a4a90"/></svg><div style="position:absolute;left:389px;top:802px;width:450px;height:17px;background:#f6f6f6"></div><div style="position:absolute;left:840px;top:802px;width:164px;height:17px;background:#ffff00"></div><div style="position:absolute;left:1005px;top:802px;width:89px;height:17px;background:#ffff00"></div><div style="position:absolute;left:1095px;top:802px;width:100px;height:17px;background:#fff"></div><div style="position:absolute;left:389px;top:819px;width:806px;height:1px;background:#e3e3e3"></div><div style="position:absolute;left:839px;top:802px;width:1px;height:17px;background:#e3e3e3"></div><div style="position:absolute;left:1004px;top:802px;width:1px;height:17px;background:#e3e3e3"></div><div style="position:absolute;left:1094px;top:802px;width:1px;height:17px;background:#e3e3e3"></div><div class="t" style="left:429px;top:801.5px;font-size:12.8px;color:#138013;transform:scaleX(0.8115);transform-origin:0 0;">ICSR</div><div class="t" style="left:845px;top:801.5px;font-size:12.8px;color:#000;transform:scaleX(0.8495);transform-origin:0 0;">0x00000870</div><div class="t" style="left:1011px;top:801.5px;font-size:12.8px;color:#000;transform:scaleX(0.8310);transform-origin:0 0;">000000000000...</div><div class="t" style="left:1100.5px;top:801.5px;font-size:12.8px;color:#138013;transform:scaleX(0.8265);transform-origin:0 0;">0xE000ED04</div><svg style="position:absolute;left:395px;top:808px" width="10" height="7" viewBox="0 0 10 7"><path d="M1 1 5 4.8 9 1" fill="none" stroke="#3a3a3a" stroke-width="1.8"/></svg><svg style="position:absolute;left:409px;top:805px" width="16" height="12" viewBox="0 0 16 12"><path d="M1.5 0 v5 M0.5 0.8 h1" stroke="#3c4a66" stroke-width="1" fill="none"/><rect x="4.5" y="0.5" width="2.2" height="4.2" rx="1" fill="none" stroke="#3c4a66" stroke-width="0.9"/><path d="M9.5 0 v5 M8.5 0.8 h1" stroke="#3c4a66" stroke-width="1" fill="none"/><rect x="12.5" y="0.5" width="2.2" height="4.2" rx="1" fill="none" stroke="#3c4a66" stroke-width="0.9"/><rect x="0.5" y="6.5" width="2.2" height="4.2" rx="1" fill="none" stroke="#3c4a66" stroke-width="0.9"/><path d="M5.5 6 v5 M4.5 6.8 h1" stroke="#3c4a66" stroke-width="1" fill="none"/><rect x="8.5" y="6.5" width="2.2" height="4.2" rx="1" fill="none" stroke="#3c4a66" stroke-width="0.9"/><path d="M13.5 6 v5 M12.5 6.8 h1" stroke="#3c4a66" stroke-width="1" fill="none"/></svg><div style="position:absolute;left:389px;top:820px;width:450px;height:17px;background:#f6f6f6"></div><div style="position:absolute;left:840px;top:820px;width:164px;height:17px;background:#ffff00"></div><div style="position:absolute;left:1005px;top:820px;width:89px;height:17px;background:#ffff00"></div><div style="position:absolute;left:1095px;top:820px;width:100px;height:17px;background:#fff"></div><div style="position:absolute;left:389px;top:837px;width:806px;height:1px;background:#e3e3e3"></div><div style="position:absolute;left:839px;top:820px;width:1px;height:17px;background:#e3e3e3"></div><div style="position:absolute;left:1004px;top:820px;width:1px;height:17px;background:#e3e3e3"></div><div style="position:absolute;left:1094px;top:820px;width:1px;height:17px;background:#e3e3e3"></div><div class="t" style="left:445px;top:819.5px;font-size:12.8px;color:#000;transform:scaleX(0.8532);transform-origin:0 0;">VECTACTIVE (bits 0-8)</div><div class="t" style="left:845px;top:819.5px;font-size:12.8px;color:#000;transform:scaleX(0.8770);transform-origin:0 0;">0x070</div><div class="t" style="left:1011px;top:819.5px;font-size:12.8px;color:#000;transform:scaleX(0.8765);transform-origin:0 0;">001110000</div><svg style="position:absolute;left:425px;top:821.5px" width="15" height="14" viewBox="0 0 15 14"><rect x="0.5" y="0.5" width="12" height="12.5" rx="1.5" fill="#eef4fc" stroke="#a8884a"/><circle cx="2.6" cy="2.6" r="0.6" fill="#5a7ab0"/><circle cx="2.6" cy="10.6" r="0.6" fill="#5a7ab0"/><circle cx="4.6" cy="2.6" r="0.6" fill="#5a7ab0"/><circle cx="4.6" cy="10.6" r="0.6" fill="#5a7ab0"/><circle cx="6.6" cy="2.6" r="0.6" fill="#5a7ab0"/><circle cx="6.6" cy="10.6" r="0.6" fill="#5a7ab0"/><circle cx="8.6" cy="2.6" r="0.6" fill="#5a7ab0"/><circle cx="8.6" cy="10.6" r="0.6" fill="#5a7ab0"/><circle cx="10.6" cy="2.6" r="0.6" fill="#5a7ab0"/><circle cx="10.6" cy="10.6" r="0.6" fill="#5a7ab0"/><circle cx="2.6" cy="6.6" r="0.6" fill="#5a7ab0"/><rect x="4.6" y="4.4" width="9" height="4.6" fill="#fff" stroke="#3a6ab0" stroke-width="1.2"/><circle cx="7" cy="6.7" r="0.6" fill="#2a4a90"/><circle cx="9" cy="6.7" r="0.6" fill="#2a4a90"/><circle cx="11" cy="6.7" r="0.6" fill="#2a4a90"/></svg><div style="position:absolute;left:389px;top:838px;width:450px;height:17px;background:#f6f6f6"></div><div style="position:absolute;left:840px;top:838px;width:164px;height:17px;background:#ffff00"></div><div style="position:absolute;left:1005px;top:838px;width:89px;height:17px;background:#ffff00"></div><div style="position:absolute;left:1095px;top:838px;width:100px;height:17px;background:#fff"></div><div style="position:absolute;left:389px;top:855px;width:806px;height:1px;background:#e3e3e3"></div><div style="position:absolute;left:839px;top:838px;width:1px;height:17px;background:#e3e3e3"></div><div style="position:absolute;left:1004px;top:838px;width:1px;height:17px;background:#e3e3e3"></div><div style="position:absolute;left:1094px;top:838px;width:1px;height:17px;background:#e3e3e3"></div><div class="t" style="left:445px;top:837.5px;font-size:12.8px;color:#000;transform:scaleX(0.8340);transform-origin:0 0;">RETTOBASE (bit 11)</div><div class="t" style="left:845px;top:837.5px;font-size:12.8px;color:#000;transform:scaleX(0.8404);transform-origin:0 0;">0x1</div><div class="t" style="left:1011px;top:837.5px;font-size:12.8px;color:#000;transform:scaleX(0.9);transform-origin:0 0">1</div><svg style="position:absolute;left:425px;top:839.5px" width="15" height="14" viewBox="0 0 15 14"><rect x="0.5" y="0.5" width="12" height="12.5" rx="1.5" fill="#eef4fc" stroke="#a8884a"/><circle cx="2.6" cy="2.6" r="0.6" fill="#5a7ab0"/><circle cx="2.6" cy="10.6" r="0.6" fill="#5a7ab0"/><circle cx="4.6" cy="2.6" r="0.6" fill="#5a7ab0"/><circle cx="4.6" cy="10.6" r="0.6" fill="#5a7ab0"/><circle cx="6.6" cy="2.6" r="0.6" fill="#5a7ab0"/><circle cx="6.6" cy="10.6" r="0.6" fill="#5a7ab0"/><circle cx="8.6" cy="2.6" r="0.6" fill="#5a7ab0"/><circle cx="8.6" cy="10.6" r="0.6" fill="#5a7ab0"/><circle cx="10.6" cy="2.6" r="0.6" fill="#5a7ab0"/><circle cx="10.6" cy="10.6" r="0.6" fill="#5a7ab0"/><circle cx="2.6" cy="6.6" r="0.6" fill="#5a7ab0"/><rect x="4.6" y="4.4" width="9" height="4.6" fill="#fff" stroke="#3a6ab0" stroke-width="1.2"/><circle cx="7" cy="6.7" r="0.6" fill="#2a4a90"/><circle cx="9" cy="6.7" r="0.6" fill="#2a4a90"/><circle cx="11" cy="6.7" r="0.6" fill="#2a4a90"/></svg><div style="position:absolute;left:389px;top:856px;width:450px;height:17px;background:#f6f6f6"></div><div style="position:absolute;left:840px;top:856px;width:164px;height:17px;background:#fff"></div><div style="position:absolute;left:1005px;top:856px;width:89px;height:17px;background:#fff"></div><div style="position:absolute;left:1095px;top:856px;width:100px;height:17px;background:#fff"></div><div style="position:absolute;left:389px;top:873px;width:806px;height:1px;background:#e3e3e3"></div><div style="position:absolute;left:839px;top:856px;width:1px;height:17px;background:#e3e3e3"></div><div style="position:absolute;left:1004px;top:856px;width:1px;height:17px;background:#e3e3e3"></div><div style="position:absolute;left:1094px;top:856px;width:1px;height:17px;background:#e3e3e3"></div><div class="t" style="left:445px;top:855.5px;font-size:12.8px;color:#000;transform:scaleX(0.8641);transform-origin:0 0;">VECTPENDING (bits 12-17)</div><div class="t" style="left:845px;top:855.5px;font-size:12.8px;color:#000;transform:scaleX(0.8972);transform-origin:0 0;">0x00</div><div class="t" style="left:1011px;top:855.5px;font-size:12.8px;color:#000;transform:scaleX(0.8633);transform-origin:0 0;">000000</div><svg style="position:absolute;left:425px;top:857.5px" width="15" height="14" viewBox="0 0 15 14"><rect x="0.5" y="0.5" width="12" height="12.5" rx="1.5" fill="#eef4fc" stroke="#a8884a"/><circle cx="2.6" cy="2.6" r="0.6" fill="#5a7ab0"/><circle cx="2.6" cy="10.6" r="0.6" fill="#5a7ab0"/><circle cx="4.6" cy="2.6" r="0.6" fill="#5a7ab0"/><circle cx="4.6" cy="10.6" r="0.6" fill="#5a7ab0"/><circle cx="6.6" cy="2.6" r="0.6" fill="#5a7ab0"/><circle cx="6.6" cy="10.6" r="0.6" fill="#5a7ab0"/><circle cx="8.6" cy="2.6" r="0.6" fill="#5a7ab0"/><circle cx="8.6" cy="10.6" r="0.6" fill="#5a7ab0"/><circle cx="10.6" cy="2.6" r="0.6" fill="#5a7ab0"/><circle cx="10.6" cy="10.6" r="0.6" fill="#5a7ab0"/><circle cx="2.6" cy="6.6" r="0.6" fill="#5a7ab0"/><rect x="4.6" y="4.4" width="9" height="4.6" fill="#fff" stroke="#3a6ab0" stroke-width="1.2"/><circle cx="7" cy="6.7" r="0.6" fill="#2a4a90"/><circle cx="9" cy="6.7" r="0.6" fill="#2a4a90"/><circle cx="11" cy="6.7" r="0.6" fill="#2a4a90"/></svg><div style="position:absolute;left:389px;top:874px;width:450px;height:17px;background:#f6f6f6"></div><div style="position:absolute;left:840px;top:874px;width:164px;height:17px;background:#fff"></div><div style="position:absolute;left:1005px;top:874px;width:89px;height:17px;background:#fff"></div><div style="position:absolute;left:1095px;top:874px;width:100px;height:17px;background:#fff"></div><div style="position:absolute;left:389px;top:891px;width:806px;height:1px;background:#e3e3e3"></div><div style="position:absolute;left:839px;top:874px;width:1px;height:17px;background:#e3e3e3"></div><div style="position:absolute;left:1004px;top:874px;width:1px;height:17px;background:#e3e3e3"></div><div style="position:absolute;left:1094px;top:874px;width:1px;height:17px;background:#e3e3e3"></div><div class="t" style="left:445px;top:873.5px;font-size:12.8px;color:#000;transform:scaleX(0.8605);transform-origin:0 0;">ISRPENDING (bit 22)</div><div class="t" style="left:845px;top:873.5px;font-size:12.8px;color:#000;transform:scaleX(0.8914);transform-origin:0 0;">0x0</div><div class="t" style="left:1011px;top:873.5px;font-size:12.8px;color:#000;transform:scaleX(0.9);transform-origin:0 0">0</div><svg style="position:absolute;left:425px;top:875.5px" width="15" height="14" viewBox="0 0 15 14"><rect x="0.5" y="0.5" width="12" height="12.5" rx="1.5" fill="#eef4fc" stroke="#a8884a"/><circle cx="2.6" cy="2.6" r="0.6" fill="#5a7ab0"/><circle cx="2.6" cy="10.6" r="0.6" fill="#5a7ab0"/><circle cx="4.6" cy="2.6" r="0.6" fill="#5a7ab0"/><circle cx="4.6" cy="10.6" r="0.6" fill="#5a7ab0"/><circle cx="6.6" cy="2.6" r="0.6" fill="#5a7ab0"/><circle cx="6.6" cy="10.6" r="0.6" fill="#5a7ab0"/><circle cx="8.6" cy="2.6" r="0.6" fill="#5a7ab0"/><circle cx="8.6" cy="10.6" r="0.6" fill="#5a7ab0"/><circle cx="10.6" cy="2.6" r="0.6" fill="#5a7ab0"/><circle cx="10.6" cy="10.6" r="0.6" fill="#5a7ab0"/><circle cx="2.6" cy="6.6" r="0.6" fill="#5a7ab0"/><rect x="4.6" y="4.4" width="9" height="4.6" fill="#fff" stroke="#3a6ab0" stroke-width="1.2"/><circle cx="7" cy="6.7" r="0.6" fill="#2a4a90"/><circle cx="9" cy="6.7" r="0.6" fill="#2a4a90"/><circle cx="11" cy="6.7" r="0.6" fill="#2a4a90"/></svg><div style="position:absolute;left:389px;top:892px;width:450px;height:17px;background:#f6f6f6"></div><div style="position:absolute;left:840px;top:892px;width:164px;height:17px;background:#fff"></div><div style="position:absolute;left:1005px;top:892px;width:89px;height:17px;background:#fff"></div><div style="position:absolute;left:1095px;top:892px;width:100px;height:17px;background:#fff"></div><div style="position:absolute;left:389px;top:909px;width:806px;height:1px;background:#e3e3e3"></div><div style="position:absolute;left:839px;top:892px;width:1px;height:17px;background:#e3e3e3"></div><div style="position:absolute;left:1004px;top:892px;width:1px;height:17px;background:#e3e3e3"></div><div style="position:absolute;left:1094px;top:892px;width:1px;height:17px;background:#e3e3e3"></div><div class="t" style="left:445px;top:891.5px;font-size:12.8px;color:#000;transform:scaleX(0.8362);transform-origin:0 0;">ISRPREEMPT (bit 23)</div><div class="t" style="left:845px;top:891.5px;font-size:12.8px;color:#000;transform:scaleX(0.8914);transform-origin:0 0;">0x0</div><div class="t" style="left:1011px;top:891.5px;font-size:12.8px;color:#000;transform:scaleX(0.9);transform-origin:0 0">0</div><svg style="position:absolute;left:425px;top:893.5px" width="15" height="14" viewBox="0 0 15 14"><rect x="0.5" y="0.5" width="12" height="12.5" rx="1.5" fill="#eef4fc" stroke="#a8884a"/><circle cx="2.6" cy="2.6" r="0.6" fill="#5a7ab0"/><circle cx="2.6" cy="10.6" r="0.6" fill="#5a7ab0"/><circle cx="4.6" cy="2.6" r="0.6" fill="#5a7ab0"/><circle cx="4.6" cy="10.6" r="0.6" fill="#5a7ab0"/><circle cx="6.6" cy="2.6" r="0.6" fill="#5a7ab0"/><circle cx="6.6" cy="10.6" r="0.6" fill="#5a7ab0"/><circle cx="8.6" cy="2.6" r="0.6" fill="#5a7ab0"/><circle cx="8.6" cy="10.6" r="0.6" fill="#5a7ab0"/><circle cx="10.6" cy="2.6" r="0.6" fill="#5a7ab0"/><circle cx="10.6" cy="10.6" r="0.6" fill="#5a7ab0"/><circle cx="2.6" cy="6.6" r="0.6" fill="#5a7ab0"/><rect x="4.6" y="4.4" width="9" height="4.6" fill="#fff" stroke="#3a6ab0" stroke-width="1.2"/><circle cx="7" cy="6.7" r="0.6" fill="#2a4a90"/><circle cx="9" cy="6.7" r="0.6" fill="#2a4a90"/><circle cx="11" cy="6.7" r="0.6" fill="#2a4a90"/></svg><div style="position:absolute;left:389px;top:910px;width:450px;height:17px;background:#f6f6f6"></div><div style="position:absolute;left:840px;top:910px;width:164px;height:17px;background:#fff"></div><div style="position:absolute;left:1005px;top:910px;width:89px;height:17px;background:#fff"></div><div style="position:absolute;left:1095px;top:910px;width:100px;height:17px;background:#fff"></div><div style="position:absolute;left:389px;top:927px;width:806px;height:1px;background:#e3e3e3"></div><div style="position:absolute;left:839px;top:910px;width:1px;height:17px;background:#e3e3e3"></div><div style="position:absolute;left:1004px;top:910px;width:1px;height:17px;background:#e3e3e3"></div><div style="position:absolute;left:1094px;top:910px;width:1px;height:17px;background:#e3e3e3"></div><div class="t" style="left:445px;top:909.5px;font-size:12.8px;color:#1a1aff;transform:scaleX(0.8424);transform-origin:0 0;">PENDSTCLR (bit 25)</div><div class="t" style="left:845px;top:909.5px;font-size:12.8px;color:#1a1aff;transform:scaleX(0.8914);transform-origin:0 0;">0x0</div><div class="t" style="left:1011px;top:909.5px;font-size:12.8px;color:#1a1aff;transform:scaleX(0.9);transform-origin:0 0">0</div><svg style="position:absolute;left:425px;top:911.5px" width="15" height="14" viewBox="0 0 15 14"><rect x="0.5" y="0.5" width="12" height="12.5" rx="1.5" fill="#eef4fc" stroke="#a8884a"/><circle cx="2.6" cy="2.6" r="0.6" fill="#5a7ab0"/><circle cx="2.6" cy="10.6" r="0.6" fill="#5a7ab0"/><circle cx="4.6" cy="2.6" r="0.6" fill="#5a7ab0"/><circle cx="4.6" cy="10.6" r="0.6" fill="#5a7ab0"/><circle cx="6.6" cy="2.6" r="0.6" fill="#5a7ab0"/><circle cx="6.6" cy="10.6" r="0.6" fill="#5a7ab0"/><circle cx="8.6" cy="2.6" r="0.6" fill="#5a7ab0"/><circle cx="8.6" cy="10.6" r="0.6" fill="#5a7ab0"/><circle cx="10.6" cy="2.6" r="0.6" fill="#5a7ab0"/><circle cx="10.6" cy="10.6" r="0.6" fill="#5a7ab0"/><circle cx="2.6" cy="6.6" r="0.6" fill="#5a7ab0"/><rect x="4.6" y="4.4" width="9" height="4.6" fill="#fff" stroke="#3a6ab0" stroke-width="1.2"/><circle cx="7" cy="6.7" r="0.6" fill="#2a4a90"/><circle cx="9" cy="6.7" r="0.6" fill="#2a4a90"/><circle cx="11" cy="6.7" r="0.6" fill="#2a4a90"/></svg><div style="position:absolute;left:389px;top:928px;width:450px;height:17px;background:#f6f6f6"></div><div style="position:absolute;left:840px;top:928px;width:164px;height:17px;background:#fff"></div><div style="position:absolute;left:1005px;top:928px;width:89px;height:17px;background:#fff"></div><div style="position:absolute;left:1095px;top:928px;width:100px;height:17px;background:#fff"></div><div style="position:absolute;left:389px;top:945px;width:806px;height:1px;background:#e3e3e3"></div><div style="position:absolute;left:839px;top:928px;width:1px;height:17px;background:#e3e3e3"></div><div style="position:absolute;left:1004px;top:928px;width:1px;height:17px;background:#e3e3e3"></div><div style="position:absolute;left:1094px;top:928px;width:1px;height:17px;background:#e3e3e3"></div><div class="t" style="left:445px;top:927.5px;font-size:12.8px;color:#138013;transform:scaleX(0.8307);transform-origin:0 0;">PENDSTSET (bit 26)</div><div class="t" style="left:845px;top:927.5px;font-size:12.8px;color:#138013;transform:scaleX(0.8914);transform-origin:0 0;">0x0</div><div class="t" style="left:1011px;top:927.5px;font-size:12.8px;color:#138013;transform:scaleX(0.9);transform-origin:0 0">0</div><svg style="position:absolute;left:425px;top:929.5px" width="15" height="14" viewBox="0 0 15 14"><rect x="0.5" y="0.5" width="12" height="12.5" rx="1.5" fill="#eef4fc" stroke="#a8884a"/><circle cx="2.6" cy="2.6" r="0.6" fill="#5a7ab0"/><circle cx="2.6" cy="10.6" r="0.6" fill="#5a7ab0"/><circle cx="4.6" cy="2.6" r="0.6" fill="#5a7ab0"/><circle cx="4.6" cy="10.6" r="0.6" fill="#5a7ab0"/><circle cx="6.6" cy="2.6" r="0.6" fill="#5a7ab0"/><circle cx="6.6" cy="10.6" r="0.6" fill="#5a7ab0"/><circle cx="8.6" cy="2.6" r="0.6" fill="#5a7ab0"/><circle cx="8.6" cy="10.6" r="0.6" fill="#5a7ab0"/><circle cx="10.6" cy="2.6" r="0.6" fill="#5a7ab0"/><circle cx="10.6" cy="10.6" r="0.6" fill="#5a7ab0"/><circle cx="2.6" cy="6.6" r="0.6" fill="#5a7ab0"/><rect x="4.6" y="4.4" width="9" height="4.6" fill="#fff" stroke="#3a6ab0" stroke-width="1.2"/><circle cx="7" cy="6.7" r="0.6" fill="#2a4a90"/><circle cx="9" cy="6.7" r="0.6" fill="#2a4a90"/><circle cx="11" cy="6.7" r="0.6" fill="#2a4a90"/></svg><div style="position:absolute;left:389px;top:946px;width:450px;height:17px;background:#f6f6f6"></div><div style="position:absolute;left:840px;top:946px;width:164px;height:17px;background:#fff"></div><div style="position:absolute;left:1005px;top:946px;width:89px;height:17px;background:#fff"></div><div style="position:absolute;left:1095px;top:946px;width:100px;height:17px;background:#fff"></div><div style="position:absolute;left:389px;top:963px;width:806px;height:1px;background:#e3e3e3"></div><div style="position:absolute;left:839px;top:946px;width:1px;height:17px;background:#e3e3e3"></div><div style="position:absolute;left:1004px;top:946px;width:1px;height:17px;background:#e3e3e3"></div><div style="position:absolute;left:1094px;top:946px;width:1px;height:17px;background:#e3e3e3"></div><div class="t" style="left:445px;top:945.5px;font-size:12.8px;color:#1a1aff;transform:scaleX(0.8515);transform-origin:0 0;">PENDSVCLR (bit 27)</div><div class="t" style="left:845px;top:945.5px;font-size:12.8px;color:#1a1aff;transform:scaleX(0.8914);transform-origin:0 0;">0x0</div><div class="t" style="left:1011px;top:945.5px;font-size:12.8px;color:#1a1aff;transform:scaleX(0.9);transform-origin:0 0">0</div><svg style="position:absolute;left:425px;top:947.5px" width="15" height="14" viewBox="0 0 15 14"><rect x="0.5" y="0.5" width="12" height="12.5" rx="1.5" fill="#eef4fc" stroke="#a8884a"/><circle cx="2.6" cy="2.6" r="0.6" fill="#5a7ab0"/><circle cx="2.6" cy="10.6" r="0.6" fill="#5a7ab0"/><circle cx="4.6" cy="2.6" r="0.6" fill="#5a7ab0"/><circle cx="4.6" cy="10.6" r="0.6" fill="#5a7ab0"/><circle cx="6.6" cy="2.6" r="0.6" fill="#5a7ab0"/><circle cx="6.6" cy="10.6" r="0.6" fill="#5a7ab0"/><circle cx="8.6" cy="2.6" r="0.6" fill="#5a7ab0"/><circle cx="8.6" cy="10.6" r="0.6" fill="#5a7ab0"/><circle cx="10.6" cy="2.6" r="0.6" fill="#5a7ab0"/><circle cx="10.6" cy="10.6" r="0.6" fill="#5a7ab0"/><circle cx="2.6" cy="6.6" r="0.6" fill="#5a7ab0"/><rect x="4.6" y="4.4" width="9" height="4.6" fill="#fff" stroke="#3a6ab0" stroke-width="1.2"/><circle cx="7" cy="6.7" r="0.6" fill="#2a4a90"/><circle cx="9" cy="6.7" r="0.6" fill="#2a4a90"/><circle cx="11" cy="6.7" r="0.6" fill="#2a4a90"/></svg><div style="position:absolute;left:389px;top:964px;width:450px;height:17px;background:#f6f6f6"></div><div style="position:absolute;left:840px;top:964px;width:164px;height:17px;background:#fff"></div><div style="position:absolute;left:1005px;top:964px;width:89px;height:17px;background:#fff"></div><div style="position:absolute;left:1095px;top:964px;width:100px;height:17px;background:#fff"></div><div style="position:absolute;left:389px;top:981px;width:806px;height:1px;background:#e3e3e3"></div><div style="position:absolute;left:839px;top:964px;width:1px;height:17px;background:#e3e3e3"></div><div style="position:absolute;left:1004px;top:964px;width:1px;height:17px;background:#e3e3e3"></div><div style="position:absolute;left:1094px;top:964px;width:1px;height:17px;background:#e3e3e3"></div><div class="t" style="left:445px;top:963.5px;font-size:12.8px;color:#138013;transform:scaleX(0.8341);transform-origin:0 0;">PENDSVSET (bit 28)</div><div class="t" style="left:845px;top:963.5px;font-size:12.8px;color:#138013;transform:scaleX(0.8914);transform-origin:0 0;">0x0</div><div class="t" style="left:1011px;top:963.5px;font-size:12.8px;color:#138013;transform:scaleX(0.9);transform-origin:0 0">0</div><svg style="position:absolute;left:425px;top:965.5px" width="15" height="14" viewBox="0 0 15 14"><rect x="0.5" y="0.5" width="12" height="12.5" rx="1.5" fill="#eef4fc" stroke="#a8884a"/><circle cx="2.6" cy="2.6" r="0.6" fill="#5a7ab0"/><circle cx="2.6" cy="10.6" r="0.6" fill="#5a7ab0"/><circle cx="4.6" cy="2.6" r="0.6" fill="#5a7ab0"/><circle cx="4.6" cy="10.6" r="0.6" fill="#5a7ab0"/><circle cx="6.6" cy="2.6" r="0.6" fill="#5a7ab0"/><circle cx="6.6" cy="10.6" r="0.6" fill="#5a7ab0"/><circle cx="8.6" cy="2.6" r="0.6" fill="#5a7ab0"/><circle cx="8.6" cy="10.6" r="0.6" fill="#5a7ab0"/><circle cx="10.6" cy="2.6" r="0.6" fill="#5a7ab0"/><circle cx="10.6" cy="10.6" r="0.6" fill="#5a7ab0"/><circle cx="2.6" cy="6.6" r="0.6" fill="#5a7ab0"/><rect x="4.6" y="4.4" width="9" height="4.6" fill="#fff" stroke="#3a6ab0" stroke-width="1.2"/><circle cx="7" cy="6.7" r="0.6" fill="#2a4a90"/><circle cx="9" cy="6.7" r="0.6" fill="#2a4a90"/><circle cx="11" cy="6.7" r="0.6" fill="#2a4a90"/></svg><svg style="position:absolute;left:839px;top:675px" width="31" height="19" viewBox="0 0 31 19"><path d="M1 1.5 L30 1 M29 1 L29.5 18 M30 17.5 L1 18 M1.5 19 L1 1" fill="none" stroke="#e8141c" stroke-width="2" stroke-linecap="round"/></svg><svg style="position:absolute;left:839px;top:711px" width="31" height="56" viewBox="0 0 31 56"><path d="M1 1.5 L30 1 M29 1 L29.5 55 M30 54.5 L1 55 M1.5 56 L1 1" fill="none" stroke="#e8141c" stroke-width="2" stroke-linecap="round"/></svg><svg style="position:absolute;left:839px;top:818px" width="43" height="21" viewBox="0 0 43 21"><path d="M1 1.5 L42 1 M41 1 L41.5 20 M42 19.5 L1 20 M1.5 21 L1 1" fill="none" stroke="#e8141c" stroke-width="2" stroke-linecap="round"/></svg><div class="t" style="left:21px;top:39px;font-size:12.8px;color:#000;transform:scaleX(0.9262);transform-origin:0 0;">Debug</div><svg style="position:absolute;left:64px;top:42.5px" width="11" height="11" viewBox="0 0 11 11"><g transform="scale(0.93)"><path d="M0.6 0.6H3L5.5 3.2 8 0.6H10.4V3L7.8 5.5 10.4 8V10.4H8L5.5 7.8 3 10.4H0.6V8L3.2 5.5 0.6 3Z" fill="#fff" stroke="#505050" stroke-width="1.05" stroke-linejoin="round"/></g></svg><div class="t" style="left:105px;top:39px;font-size:12.8px;color:#8a8e96;transform:scaleX(0.9108);transform-origin:0 0;">Project Explorer</div><svg style="position:absolute;left:334px;top:41px" width="36" height="12" viewBox="0 0 36 12"><rect x="0.5" y="0.5" width="10" height="3" fill="none" stroke="#555" stroke-width="1.1"/><rect x="23.5" y="0.5" width="9.5" height="10" fill="none" stroke="#555" stroke-width="1.1"/><path d="M23.5 2.6h9.5" stroke="#555" stroke-width="1"/></svg><div class="t" style="left:21px;top:729px;font-size:12.8px;color:#000;transform:scaleX(0.9009);transform-origin:0 0;">Dashboard</div><svg style="position:absolute;left:86px;top:732.5px" width="11" height="11" viewBox="0 0 11 11"><g transform="scale(0.93)"><path d="M0.6 0.6H3L5.5 3.2 8 0.6H10.4V3L7.8 5.5 10.4 8V10.4H8L5.5 7.8 3 10.4H0.6V8L3.2 5.5 0.6 3Z" fill="#fff" stroke="#505050" stroke-width="1.05" stroke-linejoin="round"/></g></svg><svg style="position:absolute;left:334px;top:732px" width="36" height="12" viewBox="0 0 36 12"><rect x="0.5" y="0.5" width="10" height="3" fill="none" stroke="#555" stroke-width="1.1"/><rect x="23.5" y="0.5" width="9.5" height="10" fill="none" stroke="#555" stroke-width="1.1"/><path d="M23.5 2.6h9.5" stroke="#555" stroke-width="1"/></svg><div style="position:absolute;left:5px;top:757px;width:171px;height:2px;background:linear-gradient(#eef0f3,#fbfcfd)"></div><div style="position:absolute;left:188px;top:757px;width:116px;height:2px;background:linear-gradient(#eef0f3,#fbfcfd)"></div><div style="position:absolute;left:5px;top:824px;width:96px;height:2px;background:linear-gradient(#eef0f3,#fbfcfd)"></div><div style="position:absolute;left:188px;top:840px;width:114px;height:2px;background:linear-gradient(#eef0f3,#fbfcfd)"></div><svg style="position:absolute;left:12px;top:765px" width="8" height="5" viewBox="0 0 8 5"><path d="M0 0h7.5l-3.75 4.5z" fill="#0b6fdc"/></svg><div class="t" style="left:26px;top:759px;font-size:12.8px;color:#0b6fdc;font-weight:bold;transform:scaleX(0.9096);transform-origin:0 0;">Project Creation</div><svg style="position:absolute;left:195px;top:765px" width="8" height="5" viewBox="0 0 8 5"><path d="M0 0h7.5l-3.75 4.5z" fill="#0b6fdc"/></svg><div class="t" style="left:209px;top:759px;font-size:12.8px;color:#0b6fdc;font-weight:bold;transform:scaleX(0.9296);transform-origin:0 0;">Settings</div><svg style="position:absolute;left:12px;top:830px" width="8" height="5" viewBox="0 0 8 5"><path d="M0 0h7.5l-3.75 4.5z" fill="#0b6fdc"/></svg><div class="t" style="left:26px;top:824px;font-size:12.8px;color:#0b6fdc;font-weight:bold;transform:scaleX(0.9280);transform-origin:0 0;">Build/Debug</div><svg style="position:absolute;left:195px;top:847px" width="8" height="5" viewBox="0 0 8 5"><path d="M0 0h7.5l-3.75 4.5z" fill="#0b6fdc"/></svg><div class="t" style="left:209px;top:841px;font-size:12.8px;color:#0b6fdc;font-weight:bold;transform:scaleX(0.8904);transform-origin:0 0;">Miscellaneous</div><div class="t" style="left:34px;top:781px;font-size:12.8px;color:#1a62d4;transform:scaleX(0.9122);transform-origin:0 0;">S32DS Application Project</div><div class="t" style="left:34px;top:799px;font-size:12.8px;color:#1a62d4;transform:scaleX(0.8838);transform-origin:0 0;">S32DS Library Project</div><div class="t" style="left:34px;top:846px;font-size:12.8px;color:#1a62d4;transform:scaleX(0.9834);transform-origin:0 0;">Build</div><div class="t" style="left:71px;top:846px;font-size:12.8px;color:#1a62d4;transform:scaleX(1.0118);transform-origin:0 0;">(All)</div><div class="t" style="left:34px;top:863px;font-size:12.8px;color:#1a62d4;transform:scaleX(0.9557);transform-origin:0 0;">Clean</div><div class="t" style="left:71px;top:863px;font-size:12.8px;color:#1a62d4;transform:scaleX(1.0118);transform-origin:0 0;">(All)</div><div class="t" style="left:34px;top:881px;font-size:12.8px;color:#1a62d4;transform:scaleX(0.9534);transform-origin:0 0;">Debug</div><div class="t" style="left:217px;top:781px;font-size:12.8px;color:#1a62d4;transform:scaleX(0.9366);transform-origin:0 0;">Project settings</div><div class="t" style="left:217px;top:799px;font-size:12.8px;color:#1a62d4;transform:scaleX(0.9452);transform-origin:0 0;">Build settings</div><div class="t" style="left:217px;top:816px;font-size:12.8px;color:#1a62d4;transform:scaleX(0.9364);transform-origin:0 0;">Debug settings</div><div class="t" style="left:217px;top:863px;font-size:12.8px;color:#1a62d4;transform:scaleX(0.9286);transform-origin:0 0;">Getting Started</div><div class="t" style="left:217px;top:881px;font-size:12.8px;color:#1a62d4;transform:scaleX(0.9055);transform-origin:0 0;">Quick access</div><svg style="position:absolute;left:5px;top:13px" width="16" height="15" viewBox="0 0 16 15"><rect x="0.5" y="2.5" width="12" height="11" fill="#f4f8fc" stroke="#a08850"/><rect x="1" y="3" width="11" height="2.5" fill="#5b9bd5"/><path d="M3 13 C8 12 11 9 12 5" stroke="#f0d890" stroke-width="1.5" fill="none"/><path d="M12 0.5v6M9 3.5h6" stroke="#c8a040" stroke-width="2.6"/><path d="M12 1v5M9.5 3.5h5" stroke="#fff2b0" stroke-width="1"/></svg><svg style="position:absolute;left:27px;top:18px" width="8" height="5" viewBox="0 0 8 5"><path d="M0 0h7.5l-3.75 4z" fill="#1e1e1e"/></svg><svg style="position:absolute;left:42px;top:13px" width="15" height="15" viewBox="0 0 15 15"><path d="M0.5 1.5a1 1 0 0 1 1-1h11l2 2v11a1 1 0 0 1-1 1h-12a1 1 0 0 1-1-1z" fill="#e2e2e2" stroke="#b5b5b5"/><rect x="3" y="1" width="9" height="5" fill="#f3f3f3" stroke="#c0c0c0" stroke-width="0.8"/><rect x="4" y="9" width="7" height="5" fill="#f6f6f6" stroke="#bdbdbd" stroke-width="0.8"/></svg><svg style="position:absolute;left:65px;top:13px" width="16" height="15" viewBox="0 0 16 15"><path d="M0.5 1.5h9l2 2v7h-11z" fill="#e0e0e0" stroke="#bbb"/><path d="M2.5 3.5h9l2 2v7h-11z" fill="#e4e4e4" stroke="#b8b8b8"/><path d="M4.5 5.5a1 1 0 0 1 1-1h8l2 2v8h-11z" fill="#e2e2e2" stroke="#b5b5b5"/><rect x="7" y="10" width="6" height="4" fill="#f6f6f6" stroke="#bdbdbd" stroke-width="0.8"/></svg><div style="position:absolute;left:86px;top:11px;width:1px;height:18px;background:#6e6e6e"></div><svg style="position:absolute;left:97px;top:13px" width="14" height="15" viewBox="0 0 14 15"><path d="M0.5 0.5h9l3.5 3.5v10.5h-12.5z" fill="#f8fafc" stroke="#8aa0c0"/><path d="M9.5 0.5v3.5h3.5" fill="#e8d090" stroke="#c0a050"/><path d="M2 3.5h6M2 5.5h8" stroke="#4f7fc0" stroke-width="1"/><text x="0.5" y="13.5" font-size="7.5" font-weight="bold" font-family="Liberation Sans" fill="#1e3f78" letter-spacing="-0.3">010</text></svg><svg style="position:absolute;left:116px;top:12px" width="3" height="16" viewBox="0 0 3 16"><rect x="0.5" y="1" width="2" height="2" fill="#b8aa88"/><rect x="0.5" y="5" width="2" height="2" fill="#b8aa88"/><rect x="0.5" y="9" width="2" height="2" fill="#b8aa88"/><rect x="0.5" y="13" width="2" height="2" fill="#b8aa88"/></svg><svg style="position:absolute;left:125px;top:13px" width="14" height="15" viewBox="0 0 14 15"><path d="M0.5 0.5h9l3.5 3.5v10.5h-12.5z" fill="#eee" stroke="#aaa"/><path d="M9.5 0.5v3.5h3.5" fill="#ccc" stroke="#aaa"/><text x="2.5" y="12.5" font-size="10" font-weight="bold" font-family="Liberation Sans" fill="#a8a8a8">c</text></svg><svg style="position:absolute;left:145px;top:12px" width="3" height="16" viewBox="0 0 3 16"><rect x="0.5" y="1" width="2" height="2" fill="#b8aa88"/><rect x="0.5" y="5" width="2" height="2" fill="#b8aa88"/><rect x="0.5" y="9" width="2" height="2" fill="#b8aa88"/><rect x="0.5" y="13" width="2" height="2" fill="#b8aa88"/></svg><svg style="position:absolute;left:153px;top:13px" width="16" height="15" viewBox="0 0 16 15"><path d="M1 9 6 4v3c4 0 7-1 8-6 1 6-1 10-8 10v3z" fill="#e0e0e0" stroke="#bdbdbd" stroke-linejoin="round"/></svg><svg style="position:absolute;left:175px;top:13px" width="16" height="15" viewBox="0 0 16 15"><path d="M15 9 10 4v3C6 7 3 6 2 1 1 7 3 11 10 11v3z" fill="#e0e0e0" stroke="#bdbdbd" stroke-linejoin="round"/></svg><svg style="position:absolute;left:196px;top:12px" width="3" height="16" viewBox="0 0 3 16"><rect x="0.5" y="1" width="2" height="2" fill="#b8aa88"/><rect x="0.5" y="5" width="2" height="2" fill="#b8aa88"/><rect x="0.5" y="9" width="2" height="2" fill="#b8aa88"/><rect x="0.5" y="13" width="2" height="2" fill="#b8aa88"/></svg><svg style="position:absolute;left:205px;top:13px" width="13" height="13" viewBox="0 0 13 13"><rect x="0.75" y="0.75" width="11.5" height="8.5" rx="1.5" fill="#fff" stroke="#2e5ea8" stroke-width="1.5"/><path d="M3 3.5h5M3 6h6" stroke="#2e5ea8" stroke-width="1"/><path d="M5 10h3v1.5h3v1.2h-9v-1.2h3z" fill="#2e5ea8"/></svg><svg style="position:absolute;left:224px;top:12px" width="3" height="16" viewBox="0 0 3 16"><rect x="0.5" y="1" width="2" height="2" fill="#b8aa88"/><rect x="0.5" y="5" width="2" height="2" fill="#b8aa88"/><rect x="0.5" y="9" width="2" height="2" fill="#b8aa88"/><rect x="0.5" y="13" width="2" height="2" fill="#b8aa88"/></svg><svg style="position:absolute;left:233px;top:14px" width="13" height="12" viewBox="0 0 13 12"><circle cx="7" cy="6.5" r="3.8" fill="#9ec4e0" stroke="#3e78a8" stroke-width="1.2"/><path d="M0.5 0.5 12.5 11.5" stroke="#1a3a88" stroke-width="1.4"/></svg><div style="position:absolute;left:253px;top:11px;width:1px;height:18px;background:#6e6e6e"></div><svg style="position:absolute;left:263px;top:16px" width="15" height="9" viewBox="0 0 15 9"><rect x="0.5" y="0.5" width="4" height="8.5" fill="#f5d250" stroke="#b08820"/><path d="M6 0 14.5 4.5 6 9z" fill="#3aa84a"/></svg><svg style="position:absolute;left:288px;top:15px" width="11" height="11" viewBox="0 0 11 11"><rect x="0.5" y="0.5" width="3.5" height="10" fill="#e8e8e8" stroke="#bcbcbc"/><rect x="6.5" y="0.5" width="3.5" height="10" fill="#e8e8e8" stroke="#bcbcbc"/></svg><svg style="position:absolute;left:311px;top:15px" width="11" height="11" viewBox="0 0 11 11"><rect x="0.5" y="0.5" width="10" height="10" rx="1.5" fill="#e5262e" stroke="#f07070"/><rect x="2" y="2" width="7" height="3" fill="#f04850"/></svg><svg style="position:absolute;left:332px;top:13px" width="15" height="14" viewBox="0 0 15 14"><path d="M2.5 11 6 3 9 9 7.5 7 11 10 12 2.5" fill="none" stroke="#d82030" stroke-width="1.2"/><circle cx="2.5" cy="11" r="2.2" fill="#e84050" stroke="#c01828" stroke-width="0.8"/><circle cx="12" cy="2.5" r="2.2" fill="#e84050" stroke="#c01828" stroke-width="0.8"/></svg><svg style="position:absolute;left:355px;top:15px" width="16" height="12" viewBox="0 0 16 12"><path d="M1.5 1.5H6.5Q7.5 1.5 7.5 3V6" fill="none" stroke="#c48c1c" stroke-width="3" stroke-linecap="round" stroke-linejoin="round"/><path d="M1.5 1.5H6.5Q7.5 1.5 7.5 3V6" fill="none" stroke="#fff2c0" stroke-width="1.1" stroke-linecap="round"/><path d="M4.5 6H10.5L7.5 9.5Z" fill="#fde9a8" stroke="#c48c1c" stroke-width="1" stroke-linejoin="round"/><path d="M0.2 11.2a1.8 1.3 0 0 1 3.6 0z" fill="#3a5a88"/><path d="M11.2 11.2a1.8 1.3 0 0 1 3.6 0z" fill="#3a5a88"/></svg><svg style="position:absolute;left:378px;top:15px" width="16" height="12" viewBox="0 0 16 12"><path d="M1.8 6.5V4.5Q1.8 1.5 4.8 1.5H8.5Q11.5 1.5 11.5 4.5V6" fill="none" stroke="#c48c1c" stroke-width="3" stroke-linecap="round" stroke-linejoin="round"/><path d="M1.8 6.5V4.5Q1.8 1.5 4.8 1.5H8.5Q11.5 1.5 11.5 4.5V6" fill="none" stroke="#fff2c0" stroke-width="1.1" stroke-linecap="round"/><path d="M8.5 6H14.5L11.5 9.5Z" fill="#fde9a8" stroke="#c48c1c" stroke-width="1" stroke-linejoin="round"/><path d="M4.2 11.2a1.8 1.3 0 0 1 3.6 0z" fill="#3a5a88"/></svg><svg style="position:absolute;left:401px;top:15px" width="16" height="12" viewBox="0 0 16 12"><path d="M6.8 10V5Q6.8 3 8.8 3H11" fill="none" stroke="#c48c1c" stroke-width="3" stroke-linecap="round" stroke-linejoin="round"/><path d="M6.8 10V5Q6.8 3 8.8 3H11" fill="none" stroke="#fff2c0" stroke-width="1.1" stroke-linecap="round"/><path d="M11 -0.2L14.8 3 11 6.2Z" fill="#fde9a8" stroke="#c48c1c" stroke-width="1" stroke-linejoin="round"/><path d="M0.2 11.2a1.8 1.3 0 0 1 3.6 0z" fill="#3a5a88"/><path d="M11.2 11.2a1.8 1.3 0 0 1 3.6 0z" fill="#3a5a88"/></svg><div style="position:absolute;left:422px;top:11px;width:1px;height:18px;background:#6e6e6e"></div><svg style="position:absolute;left:430px;top:13px" width="17" height="13" viewBox="0 0 17 13"><rect x="2" y="0.5" width="2.6" height="2.4" fill="#10108a"/><path d="M0.5 4.5h4v6.5h1.5v1.6h-5.5v-1.6h1.5v-4.9h-1.5z" fill="#10108a"/><path d="M6.5 4.8h4.5v-2.3l4.5 4-4.5 4v-2.3h-4.5z" fill="#e8d040" stroke="#a08020" stroke-width="0.8"/></svg><svg style="position:absolute;left:455px;top:13px" width="15" height="15" viewBox="0 0 15 15"><path d="M0 1.5h12M0 4.5h12M0 7.5h9M0 10.5h6" stroke="#a8a8a8" stroke-width="1.6"/><path d="M7 10h4v-2l4 3.5-4 3.5v-2h-4z" fill="#eee" stroke="#bbb" stroke-width="0.8"/></svg><svg style="position:absolute;left:477px;top:13px" width="16" height="15" viewBox="0 0 16 15"><path d="M1 5h5v6h-2l3 3 3-3h-2v-6h5v2l4-3.5-4-3.5v2h-12z" fill="#eee" stroke="#c4c4c4" stroke-width="0.9"/><path d="M0 13.5h3M13 13.5h3" stroke="#bbb" stroke-width="1.4"/></svg><div style="position:absolute;left:499px;top:11px;width:1px;height:18px;background:#6e6e6e"></div><svg style="position:absolute;left:509px;top:13px" width="15" height="15" viewBox="0 0 15 15"><path d="M8 0.5v6l5-3z" fill="#28a050"/><path d="M3 6.5 0.5 9 3 11.5M1 9h2c0 3 2.5 4.5 5 4.5s5-1.5 5-4.5" fill="none" stroke="#c89020" stroke-width="2.4" stroke-linejoin="round"/><path d="M1 9h2c0 3 2.5 4.5 5 4.5s5-1.5 5-4.5" fill="none" stroke="#f8d860" stroke-width="1"/></svg><svg style="position:absolute;left:529px;top:12px" width="3" height="16" viewBox="0 0 3 16"><rect x="0.5" y="1" width="2" height="2" fill="#b8aa88"/><rect x="0.5" y="5" width="2" height="2" fill="#b8aa88"/><rect x="0.5" y="9" width="2" height="2" fill="#b8aa88"/><rect x="0.5" y="13" width="2" height="2" fill="#b8aa88"/></svg><svg style="position:absolute;left:537px;top:12px" width="16" height="16" viewBox="0 0 16 16"><rect x="0.5" y="0.5" width="15" height="15" rx="2" fill="#d8d8d8"/><rect x="3.5" y="3.5" width="9" height="9" fill="#8c8c8c" stroke="#b0b0b0"/><path d="M2 4h1.5M2 7h1.5M2 10h1.5M12.5 4h1.5M12.5 7h1.5M12.5 10h1.5M4 2v1.5M7 2v1.5M10 2v1.5M4 12.5v1.5M7 12.5v1.5M10 12.5v1.5" stroke="#aaa"/></svg><svg style="position:absolute;left:560px;top:18px" width="8" height="5" viewBox="0 0 8 5"><path d="M0 0h7.5l-3.75 4z" fill="#6a6a6a"/></svg><svg style="position:absolute;left:572px;top:12px" width="3" height="16" viewBox="0 0 3 16"><rect x="0.5" y="1" width="2" height="2" fill="#b8aa88"/><rect x="0.5" y="5" width="2" height="2" fill="#b8aa88"/><rect x="0.5" y="9" width="2" height="2" fill="#b8aa88"/><rect x="0.5" y="13" width="2" height="2" fill="#b8aa88"/></svg><svg style="position:absolute;left:581px;top:13px" width="15" height="15" viewBox="0 0 15 15"><g stroke="#2a5a5a" stroke-width="1.2" fill="none" stroke-linecap="round"><path d="M5 4 3.5 0.8M8.5 3.5 11.5 1.5M3.5 7 0.8 6.5M3.5 10 0.8 11.5M6 12.5 4.5 14.5M12 6.5 14.5 5.5M12.5 9.5 14.5 10.5M10 12.5 11 14.5"/></g><ellipse cx="8" cy="8.3" rx="3.8" ry="5.4" transform="rotate(-40 8 8.3)" fill="#a8d090" stroke="#3a6a50" stroke-width="1"/><path d="M5.5 6.5 10.5 11" stroke="#e0f0d0" stroke-width="1"/></svg><svg style="position:absolute;left:603px;top:18px" width="8" height="5" viewBox="0 0 8 5"><path d="M0 0h7.5l-3.75 4z" fill="#1e1e1e"/></svg><svg style="position:absolute;left:619px;top:13px" width="15" height="15" viewBox="0 0 15 15"><circle cx="7.5" cy="7.5" r="7" fill="#2f9a3c" stroke="#1e7a2a"/><circle cx="7.5" cy="6" r="5" fill="#5cc060" opacity="0.6"/><path d="M5.5 3.5v8l6-4z" fill="#fff"/></svg><svg style="position:absolute;left:641px;top:18px" width="8" height="5" viewBox="0 0 8 5"><path d="M0 0h7.5l-3.75 4z" fill="#1e1e1e"/></svg><svg style="position:absolute;left:656px;top:12px" width="17" height="15" viewBox="0 0 17 15"><circle cx="6" cy="6" r="5.6" fill="#2f9a3c" stroke="#1e7a2a"/><path d="M4.3 3v6l4.5-3z" fill="#fff"/><rect x="7.5" y="9" width="9" height="5.5" rx="1" fill="#e02828" stroke="#a01010" stroke-width="0.8"/><path d="M10 9V7.5h4V9" fill="none" stroke="#a01010"/><path d="M8 11.5h8" stroke="#fff" stroke-width="0.8"/></svg><svg style="position:absolute;left:679px;top:18px" width="8" height="5" viewBox="0 0 8 5"><path d="M0 0h7.5l-3.75 4z" fill="#1e1e1e"/></svg><svg style="position:absolute;left:691px;top:12px" width="3" height="16" viewBox="0 0 3 16"><rect x="0.5" y="1" width="2" height="2" fill="#b8aa88"/><rect x="0.5" y="5" width="2" height="2" fill="#b8aa88"/><rect x="0.5" y="9" width="2" height="2" fill="#b8aa88"/><rect x="0.5" y="13" width="2" height="2" fill="#b8aa88"/></svg><svg style="position:absolute;left:698px;top:13px" width="16" height="15" viewBox="0 0 16 15"><path d="M0.5 5.5h4l1 1.5h4v6.5h-9z" fill="#f0c870" stroke="#b8882a"/><path d="M2 8h13l-3 6h-11.5z" fill="#fbe0a0" stroke="#b8882a"/><circle cx="8" cy="4" r="3" fill="#7060b8" stroke="#504098" stroke-width="0.6"/><circle cx="12.5" cy="6" r="3.2" fill="#3aa04a" stroke="#207030" stroke-width="0.6"/></svg><svg style="position:absolute;left:721px;top:13px" width="16" height="15" viewBox="0 0 16 15"><path d="M0.5 5.5h4l1 1.5h4v6.5h-9z" fill="#f0c870" stroke="#b8882a"/><path d="M2 8h13l-3 6h-11.5z" fill="#fbe0a0" stroke="#b8882a"/><circle cx="8" cy="4" r="3" fill="#7060b8" stroke="#504098" stroke-width="0.6"/><circle cx="12.5" cy="6" r="3.2" fill="#3aa04a" stroke="#207030" stroke-width="0.6"/></svg><svg style="position:absolute;left:745px;top:13px" width="17" height="15" viewBox="0 0 17 15"><path d="M1 12 10 2.5 14 1 13 5 4 14z" fill="#f0c860" stroke="#b88a2a"/><path d="M3 9.5 6 12.5 8.5 10 5.5 7z" fill="#a0a0a8" stroke="#777"/><path d="M0.5 14.5 3 9.5 5.5 12z" fill="#fff8d8"/><circle cx="11.5" cy="3.5" r="0.8" fill="#2050a0"/></svg><svg style="position:absolute;left:768px;top:18px" width="8" height="5" viewBox="0 0 8 5"><path d="M0 0h7.5l-3.75 4z" fill="#1e1e1e"/></svg><svg style="position:absolute;left:780px;top:12px" width="3" height="16" viewBox="0 0 3 16"><rect x="0.5" y="1" width="2" height="2" fill="#b8aa88"/><rect x="0.5" y="5" width="2" height="2" fill="#b8aa88"/><rect x="0.5" y="9" width="2" height="2" fill="#b8aa88"/><rect x="0.5" y="13" width="2" height="2" fill="#b8aa88"/></svg><svg style="position:absolute;left:787px;top:13px" width="16" height="14" viewBox="0 0 16 14"><path d="M0.5 13.5 4 9 13 0.5 15 1 14 10 6 13.5z" fill="#e0e0dc" stroke="#c4c4c0"/><path d="M0 13.5h8" stroke="#c8c8c8"/></svg><svg style="position:absolute;left:808px;top:12px" width="3" height="16" viewBox="0 0 3 16"><rect x="0.5" y="1" width="2" height="2" fill="#b8aa88"/><rect x="0.5" y="5" width="2" height="2" fill="#b8aa88"/><rect x="0.5" y="9" width="2" height="2" fill="#b8aa88"/><rect x="0.5" y="13" width="2" height="2" fill="#b8aa88"/></svg><svg style="position:absolute;left:817px;top:12px" width="15" height="16" viewBox="0 0 15 16"><rect x="5.5" y="3.5" width="9" height="12" fill="#f0f0f0" stroke="#c4c4c4"/><path d="M8 7h5M8 9.5h5M8 12h5" stroke="#d0d0d0"/><path d="M3 0.5h3v6h2.5l-4 4.5-4-4.5h2.5z" fill="#e6e6e6" stroke="#b8b8b8"/><rect x="2" y="12" width="4" height="3" fill="#d8d8d8"/></svg><svg style="position:absolute;left:839px;top:18px" width="8" height="5" viewBox="0 0 8 5"><path d="M0 0h7.5l-3.75 4z" fill="#787878"/></svg><svg style="position:absolute;left:855px;top:12px" width="15" height="16" viewBox="0 0 15 16"><rect x="5.5" y="0.5" width="9" height="12" fill="#f0f0f0" stroke="#c4c4c4"/><path d="M8 4h5M8 6.5h5M8 9h5" stroke="#d0d0d0"/><path d="M3 15.5h3v-6h2.5l-4-4.5-4 4.5h2.5z" fill="#e6e6e6" stroke="#b8b8b8"/></svg><svg style="position:absolute;left:877px;top:18px" width="8" height="5" viewBox="0 0 8 5"><path d="M0 0h7.5l-3.75 4z" fill="#787878"/></svg><svg style="position:absolute;left:891px;top:14px" width="17" height="12" viewBox="0 0 17 12"><path d="M1 6 6 1v3h9.5v4h-9.5v3z" fill="#ececec" stroke="#c0c0c0" stroke-linejoin="round"/><path d="M2.5 0v4M0.5 2h4M1 0.5l3 3M4 0.5l-3 3" stroke="#aaa" stroke-width="0.7"/></svg><svg style="position:absolute;left:916px;top:14px" width="15" height="12" viewBox="0 0 15 12"><path d="M0.8 6 6 0.8v3h8v4.4h-8v3z" fill="#fce090" stroke="#d89018" stroke-width="1.5" stroke-linejoin="round"/></svg><svg style="position:absolute;left:938px;top:18px" width="8" height="5" viewBox="0 0 8 5"><path d="M0 0h7.5l-3.75 4z" fill="#1e1e1e"/></svg><svg style="position:absolute;left:954px;top:14px" width="15" height="12" viewBox="0 0 15 12"><path d="M14.2 6 9 0.8v3h-8v4.4h8v3z" fill="#f2f2f2" stroke="#c4c4c4" stroke-width="1.2" stroke-linejoin="round"/></svg><svg style="position:absolute;left:976px;top:18px" width="8" height="5" viewBox="0 0 8 5"><path d="M0 0h7.5l-3.75 4z" fill="#787878"/></svg><div style="position:absolute;left:989px;top:11px;width:1px;height:18px;background:#6e6e6e"></div><svg style="position:absolute;left:998px;top:13px" width="17" height="15" viewBox="0 0 17 15"><rect x="0.5" y="2.5" width="12" height="11.5" fill="#eef6fc" stroke="#a08850"/><rect x="1" y="3" width="11" height="2.5" fill="#5b9bd5"/><path d="M3 13.5C8 13 11 10 12 6" stroke="#d8eaf8" stroke-width="1.5" fill="none"/><path d="M10 1 14.5 5.5 12 7 8.5 3.5z" fill="#3aa04a" stroke="#207030" stroke-width="0.8"/><path d="M9 6 6.5 9.5" stroke="#444" stroke-width="1"/></svg><div style="position:absolute;left:0;top:84px;width:379px;height:400px;overflow:hidden"><svg style="position:absolute;left:21px;top:5px" width="13" height="13" viewBox="0 0 13 13"><rect x="4.5" y="0.5" width="8" height="7" fill="#cfe3f5" stroke="#2f6aa8"/><rect x="5" y="1" width="7" height="1.5" fill="#2f6aa8"/><rect x="0.5" y="3.5" width="8.5" height="8" fill="#a8cdef" stroke="#2f6aa8"/><rect x="1" y="4" width="7.5" height="1.5" fill="#2f6aa8"/><path d="M6 6.5v6l6.5-3z" fill="#3aa84a" stroke="#1e8030" stroke-width="0.6"/></svg><svg style="position:absolute;left:5px;top:7px" width="10" height="7" viewBox="0 0 10 7"><path d="M1 1 5 5 9 1" fill="none" stroke="#3c3c3c" stroke-width="1.5"/></svg><svg style="position:absolute;left:35px;top:19px" width="13" height="15" viewBox="0 0 13 15"><rect x="5.5" y="0.5" width="7" height="14" rx="1" fill="#c8ccd8" stroke="#8c8c78"/><path d="M6 5h6M6 7h6" stroke="#f4f4f8" stroke-width="1"/><path d="M7 1.5v3l2.5-1.5z" fill="#3aa84a"/><path d="M0 8v7l6.5-3.5z" fill="#3aa84a" stroke="#1e8030" stroke-width="0.6"/></svg><svg style="position:absolute;left:35px;top:37px" width="13" height="15" viewBox="0 0 13 15"><rect x="5.5" y="0.5" width="7" height="14" rx="1" fill="#c8ccd8" stroke="#8c8c78"/><path d="M6 5h6M6 7h6" stroke="#f4f4f8" stroke-width="1"/><path d="M7 1.5v3l2.5-1.5z" fill="#3aa84a"/><path d="M0 8v7l6.5-3.5z" fill="#3aa84a" stroke="#1e8030" stroke-width="0.6"/></svg><svg style="position:absolute;left:35px;top:55px" width="13" height="15" viewBox="0 0 13 15"><rect x="5.5" y="0.5" width="7" height="14" rx="1" fill="#c8ccd8" stroke="#8c8c78"/><path d="M6 5h6M6 7h6" stroke="#f4f4f8" stroke-width="1"/><path d="M7 1.5v3l2.5-1.5z" fill="#3aa84a"/><path d="M0 8v7l6.5-3.5z" fill="#3aa84a" stroke="#1e8030" stroke-width="0.6"/></svg><svg style="position:absolute;left:35px;top:73px" width="13" height="15" viewBox="0 0 13 15"><rect x="5.5" y="0.5" width="7" height="14" rx="1" fill="#c8ccd8" stroke="#8c8c78"/><path d="M6 5h6M6 7h6" stroke="#f4f4f8" stroke-width="1"/><path d="M7 1.5v3l2.5-1.5z" fill="#3aa84a"/><path d="M0 8v7l6.5-3.5z" fill="#3aa84a" stroke="#1e8030" stroke-width="0.6"/></svg><svg style="position:absolute;left:35px;top:91px" width="13" height="15" viewBox="0 0 13 15"><rect x="5.5" y="0.5" width="7" height="14" rx="1" fill="#c8ccd8" stroke="#8c8c78"/><path d="M6 5h6M6 7h6" stroke="#f4f4f8" stroke-width="1"/><path d="M7 1.5v3l2.5-1.5z" fill="#3aa84a"/><path d="M0 8v7l6.5-3.5z" fill="#3aa84a" stroke="#1e8030" stroke-width="0.6"/></svg><svg style="position:absolute;left:18px;top:109px" width="16" height="16" viewBox="0 0 16 16"><rect x="0" y="0" width="16" height="16" fill="#1c3c98"/><rect x="0.5" y="0.5" width="15" height="15" fill="none" stroke="#0a2470"/><text x="1.5" y="10" font-size="10" font-weight="bold" font-family="Liberation Sans" fill="#fff" letter-spacing="-1.2">PE</text><rect x="2" y="12" width="12" height="1.8" fill="#c8d4f0"/></svg><svg style="position:absolute;left:5px;top:115px" width="10" height="7" viewBox="0 0 10 7"><path d="M1 1 5 5 9 1" fill="none" stroke="#3c3c3c" stroke-width="1.5"/></svg><svg style="position:absolute;left:35px;top:128px" width="15" height="14" viewBox="0 0 15 14"><rect x="0.5" y="7.5" width="8" height="7" fill="#f0d050" stroke="#a88420" stroke-width="0.8"/><path d="M2.5 8.5v5M5.8 8.5v5" stroke="#fff4c0" stroke-width="1.4"/><g transform="translate(6,0.5)"><circle cx="4.5" cy="4.5" r="3.2" fill="#f5c040" stroke="#d89a20" stroke-width="0.9"/><path d="M4.5 0v1.5M4.5 7.5V9M0 4.5h1.5M7.5 4.5H9M1.3 1.3l1.1 1.1M6.6 6.6l1.1 1.1M1.3 7.7l1.1-1.1M6.6 2.4l1.1-1.1" stroke="#d89a20" stroke-width="1.3"/><circle cx="4.5" cy="4.5" r="1.2" fill="#fff6d0"/></g><path d="M1 4C2 1.5 5 0.5 7 1.5M8 12.5c2 0 4-1 5-3" fill="none" stroke="#2a5aa0" stroke-width="1"/><path d="M0.5 2.5 1 4.8 3 4z" fill="#2a5aa0"/></svg><svg style="position:absolute;left:21px;top:133px" width="10" height="7" viewBox="0 0 10 7"><path d="M1 1 5 5 9 1" fill="none" stroke="#3c3c3c" stroke-width="1.5"/></svg><svg style="position:absolute;left:51px;top:147px" width="14" height="14" viewBox="0 0 14 14"><rect x="0.5" y="6.5" width="8" height="7" fill="#f0d050" stroke="#a88420" stroke-width="0.8"/><path d="M2.5 7.5v5M5.8 7.5v5" stroke="#fff4c0" stroke-width="1.4"/><g transform="translate(5.5,0)"><circle cx="4.5" cy="4.5" r="3.2" fill="#f5c040" stroke="#705030" stroke-width="0.9"/><path d="M4.5 0v1.5M4.5 7.5V9M0 4.5h1.5M7.5 4.5H9M1.3 1.3l1.1 1.1M6.6 6.6l1.1 1.1M1.3 7.7l1.1-1.1M6.6 2.4l1.1-1.1" stroke="#705030" stroke-width="1.3"/><circle cx="4.5" cy="4.5" r="1.2" fill="#fff6d0"/></g></svg><svg style="position:absolute;left:37px;top:151px" width="10" height="7" viewBox="0 0 10 7"><path d="M1 1 5 5 9 1" fill="none" stroke="#3c3c3c" stroke-width="1.5"/></svg><svg style="position:absolute;left:68px;top:166px" width="12" height="11" viewBox="0 0 12 11"><path d="M0 1h12M0 5.2h12M0 9.4h12" stroke="#2a6ab0" stroke-width="1.9"/></svg><svg style="position:absolute;left:68px;top:184px" width="12" height="11" viewBox="0 0 12 11"><path d="M0 1h12M0 5.2h12M0 9.4h12" stroke="#2a6ab0" stroke-width="1.9"/></svg><svg style="position:absolute;left:68px;top:202px" width="12" height="11" viewBox="0 0 12 11"><path d="M0 1h12M0 5.2h12M0 9.4h12" stroke="#2a6ab0" stroke-width="1.9"/></svg><svg style="position:absolute;left:68px;top:220px" width="12" height="11" viewBox="0 0 12 11"><path d="M0 1h12M0 5.2h12M0 9.4h12" stroke="#2a6ab0" stroke-width="1.9"/></svg><svg style="position:absolute;left:35px;top:235px" width="13" height="15" viewBox="0 0 13 15"><rect x="5.5" y="0.5" width="7" height="14" rx="1" fill="#c8ccd8" stroke="#8c8c78"/><path d="M6 5h6M6 7h6" stroke="#f4f4f8" stroke-width="1"/><path d="M7 1.5v3l2.5-1.5z" fill="#3aa84a"/><path d="M0 8v7l6.5-3.5z" fill="#3aa84a" stroke="#1e8030" stroke-width="0.6"/></svg><svg style="position:absolute;left:35px;top:253px" width="13" height="15" viewBox="0 0 13 15"><rect x="5.5" y="0.5" width="7" height="14" rx="1" fill="#c8ccd8" stroke="#8c8c78"/><path d="M6 5h6M6 7h6" stroke="#f4f4f8" stroke-width="1"/><path d="M7 1.5v3l2.5-1.5z" fill="#3aa84a"/><path d="M0 8v7l6.5-3.5z" fill="#3aa84a" stroke="#1e8030" stroke-width="0.6"/></svg><svg style="position:absolute;left:35px;top:271px" width="13" height="15" viewBox="0 0 13 15"><rect x="5.5" y="0.5" width="7" height="14" rx="1" fill="#c8ccd8" stroke="#8c8c78"/><path d="M6 5h6M6 7h6" stroke="#f4f4f8" stroke-width="1"/><path d="M7 1.5v3l2.5-1.5z" fill="#3aa84a"/><path d="M0 8v7l6.5-3.5z" fill="#3aa84a" stroke="#1e8030" stroke-width="0.6"/></svg><svg style="position:absolute;left:18px;top:289px" width="16" height="16" viewBox="0 0 16 16"><rect x="0" y="0" width="16" height="16" fill="#1c3c98"/><rect x="0.5" y="0.5" width="15" height="15" fill="none" stroke="#0a2470"/><text x="1.5" y="10" font-size="10" font-weight="bold" font-family="Liberation Sans" fill="#fff" letter-spacing="-1.2">PE</text><rect x="2" y="12" width="12" height="1.8" fill="#c8d4f0"/></svg><svg style="position:absolute;left:5px;top:295px" width="10" height="7" viewBox="0 0 10 7"><path d="M1 1 5 5 9 1" fill="none" stroke="#3c3c3c" stroke-width="1.5"/></svg><svg style="position:absolute;left:35px;top:308px" width="15" height="14" viewBox="0 0 15 14"><rect x="0.5" y="7.5" width="8" height="7" fill="#f0d050" stroke="#a88420" stroke-width="0.8"/><path d="M2.5 8.5v5M5.8 8.5v5" stroke="#fff4c0" stroke-width="1.4"/><g transform="translate(6,0.5)"><circle cx="4.5" cy="4.5" r="3.2" fill="#f5c040" stroke="#d89a20" stroke-width="0.9"/><path d="M4.5 0v1.5M4.5 7.5V9M0 4.5h1.5M7.5 4.5H9M1.3 1.3l1.1 1.1M6.6 6.6l1.1 1.1M1.3 7.7l1.1-1.1M6.6 2.4l1.1-1.1" stroke="#d89a20" stroke-width="1.3"/><circle cx="4.5" cy="4.5" r="1.2" fill="#fff6d0"/></g><path d="M1 4C2 1.5 5 0.5 7 1.5M8 12.5c2 0 4-1 5-3" fill="none" stroke="#2a5aa0" stroke-width="1"/><path d="M0.5 2.5 1 4.8 3 4z" fill="#2a5aa0"/></svg><svg style="position:absolute;left:21px;top:313px" width="10" height="7" viewBox="0 0 10 7"><path d="M1 1 5 5 9 1" fill="none" stroke="#3c3c3c" stroke-width="1.5"/></svg><svg style="position:absolute;left:51px;top:327px" width="14" height="14" viewBox="0 0 14 14"><rect x="0.5" y="6.5" width="8" height="7" fill="#f0d050" stroke="#a88420" stroke-width="0.8"/><path d="M2.5 7.5v5M5.8 7.5v5" stroke="#fff4c0" stroke-width="1.4"/><g transform="translate(5.5,0)"><circle cx="4.5" cy="4.5" r="3.2" fill="#f5c040" stroke="#705030" stroke-width="0.9"/><path d="M4.5 0v1.5M4.5 7.5V9M0 4.5h1.5M7.5 4.5H9M1.3 1.3l1.1 1.1M6.6 6.6l1.1 1.1M1.3 7.7l1.1-1.1M6.6 2.4l1.1-1.1" stroke="#705030" stroke-width="1.3"/><circle cx="4.5" cy="4.5" r="1.2" fill="#fff6d0"/></g></svg><svg style="position:absolute;left:37px;top:331px" width="10" height="7" viewBox="0 0 10 7"><path d="M1 1 5 5 9 1" fill="none" stroke="#3c3c3c" stroke-width="1.5"/></svg><svg style="position:absolute;left:68px;top:346px" width="12" height="11" viewBox="0 0 12 11"><path d="M0 1h12M0 5.2h12M0 9.4h12" stroke="#2a6ab0" stroke-width="1.9"/></svg><svg style="position:absolute;left:35px;top:361px" width="13" height="15" viewBox="0 0 13 15"><rect x="5.5" y="0.5" width="7" height="14" rx="1" fill="#c8ccd8" stroke="#8c8c78"/><path d="M6 5h6M6 7h6" stroke="#f4f4f8" stroke-width="1"/><path d="M7 1.5v3l2.5-1.5z" fill="#3aa84a"/><path d="M0 8v7l6.5-3.5z" fill="#3aa84a" stroke="#1e8030" stroke-width="0.6"/></svg><svg style="position:absolute;left:35px;top:379px" width="13" height="15" viewBox="0 0 13 15"><rect x="5.5" y="0.5" width="7" height="14" rx="1" fill="#c8ccd8" stroke="#8c8c78"/><path d="M6 5h6M6 7h6" stroke="#f4f4f8" stroke-width="1"/><path d="M7 1.5v3l2.5-1.5z" fill="#3aa84a"/><path d="M0 8v7l6.5-3.5z" fill="#3aa84a" stroke="#1e8030" stroke-width="0.6"/></svg></div><svg style="position:absolute;left:2px;top:41px" width="16" height="15" viewBox="0 0 16 15"><g stroke="#2a5a5a" stroke-width="1.2" fill="none" stroke-linecap="round"><path d="M5 4 3.5 0.8M8.5 3.5 11.5 1.5M3.5 7 0.8 6.5M3.5 10 0.8 11.5M6 12.5 4.5 14.5M12 6.5 14.5 5.5M12.5 9.5 14.5 10.5M10 12.5 11 14.5"/></g><ellipse cx="8" cy="8.3" rx="3.8" ry="5.4" transform="rotate(-40 8 8.3)" fill="#a8d090" stroke="#3a6a50" stroke-width="1"/><path d="M5.5 6.5 10.5 11" stroke="#e0f0d0" stroke-width="1"/></svg><svg style="position:absolute;left:86px;top:40px" width="15" height="15" viewBox="0 0 15 15"><g opacity="0.55"><path d="M0.5 0.5h6l2.5 2.5v9h-8.5z" fill="#f4f6fa" stroke="#9aa0b0"/><path d="M2 4h5M2 6h5M2 8h4" stroke="#6a8ac0" stroke-width="0.8"/></g><path d="M4.5 6.5h3.5l1 1.5h5.5v6h-10z" fill="#fce8b8" stroke="#d8b070"/></svg><svg style="position:absolute;left:245px;top:67px" width="14" height="14" viewBox="0 0 14 14"><rect x="0.5" y="0.5" width="10" height="10" fill="#dfe9f6" stroke="#8aa4cc"/><rect x="3.5" y="3.5" width="9.5" height="9.5" fill="#eaf2fb" stroke="#7894c0"/><path d="M5 8.3h6.5" stroke="#1a3a8a" stroke-width="1.6"/></svg><svg style="position:absolute;left:267px;top:65px" width="16" height="16" viewBox="0 0 16 16"><path d="M2 2 9 9M9 2 2 9" stroke="#d8d8d8" stroke-width="3.2" stroke-linecap="round"/><path d="M6 6 14 14M14 6 6 14" stroke="#b0b0b0" stroke-width="3.4" stroke-linecap="round"/></svg><div style="position:absolute;left:288px;top:64px;width:1px;height:18px;background:#8a8a8a"></div><svg style="position:absolute;left:297px;top:65px" width="16" height="16"><defs><pattern id="gp" width="3" height="3" patternUnits="userSpaceOnUse"><rect width="3" height="3" fill="#c8c8c8"/><rect width="1" height="1" fill="#f4f4f4"/><rect x="2" y="1" width="1" height="1" fill="#999"/><rect x="1" y="2" width="1" height="1" fill="#eee"/></pattern></defs><rect width="16" height="16" fill="url(#gp)"/><rect x="5" y="4" width="6" height="8" fill="#a8a8a8" opacity="0.7"/></svg><div style="position:absolute;left:319px;top:64px;width:1px;height:18px;background:#8a8a8a"></div><svg style="position:absolute;left:328px;top:67px" width="16" height="11" viewBox="0 0 16 11"><rect x="2" y="0" width="2.6" height="2.3" fill="#10108a"/><path d="M0.5 3.6h4v5.6h1.5v1.4h-5.5v-1.4h1.5v-4.2h-1.5z" fill="#10108a"/><path d="M6.5 4h4v-2.5l4.5 3.8-4.5 3.8v-2.5h-4z" fill="#e8d040" stroke="#a08020" stroke-width="0.8"/></svg><svg style="position:absolute;left:359px;top:66px" width="6" height="15" viewBox="0 0 6 15"><circle cx="2.7" cy="2.3" r="1.9" fill="none" stroke="#555" stroke-width="1"/><circle cx="2.7" cy="7.3" r="1.9" fill="none" stroke="#555" stroke-width="1"/><circle cx="2.7" cy="12.3" r="1.9" fill="none" stroke="#555" stroke-width="1"/></svg><svg style="position:absolute;left:1px;top:731px" width="15" height="13" viewBox="0 0 15 13"><path d="M0.5 6 7.5 0.5 14.5 6v3.5L7.5 4 0.5 9.5z" fill="#e8c030" stroke="#706018" stroke-width="0.8"/><path d="M0.5 10 7.5 4.5 14.5 10v2.5L7.5 7 0.5 12.5z" fill="#e8c030" stroke="#706018" stroke-width="0.8"/></svg><svg style="position:absolute;left:282px;top:732px" width="16" height="12" viewBox="0 0 16 12"><path d="M0.5 2.5h4l1 1.5h5v7h-10z" fill="#fce0a0" stroke="#c8a060"/><path d="M1 11.5 3.5 6h11.5l-3 5.5z" fill="#7ab0e8" stroke="#2a4ab0"/><path d="M8 7 13 2" stroke="#1e8030" stroke-width="2.6"/><path d="M11 0.5h4.5v4.5z" fill="#3aa84a" stroke="#1e8030" stroke-width="0.6"/></svg><svg style="position:absolute;left:314px;top:730px" width="6" height="15" viewBox="0 0 6 15"><circle cx="2.7" cy="2.3" r="1.9" fill="none" stroke="#555" stroke-width="1"/><circle cx="2.7" cy="7.3" r="1.9" fill="none" stroke="#555" stroke-width="1"/><circle cx="2.7" cy="12.3" r="1.9" fill="none" stroke="#555" stroke-width="1"/></svg><svg style="position:absolute;left:11px;top:783px" width="16" height="15" viewBox="0 0 16 15"><path d="M1 3.5h8M1 3.5v10h6l2-2.5" fill="none" stroke="#f08820" stroke-width="1.6"/><path d="M12.5 0.5v7M9 4h7" stroke="#c8a838" stroke-width="2.4"/><path d="M12.5 1v6M9.5 4h6" stroke="#fff0a8" stroke-width="0.9"/></svg><svg style="position:absolute;left:11px;top:801px" width="16" height="14" viewBox="0 0 16 14"><rect x="0" y="3" width="11" height="2.5" rx="1" fill="#7cc040"/><rect x="0" y="6.5" width="13" height="3" rx="1" fill="#f07818"/><rect x="0" y="10.5" width="13" height="2.5" rx="1" fill="#48a8e8"/><path d="M12.5 0.5v6M9.5 3.5h6" stroke="#c8a838" stroke-width="2.4"/><path d="M12.5 1v5M10 3.5h5" stroke="#fff0a8" stroke-width="0.9"/></svg><svg style="position:absolute;left:11px;top:847px" width="15" height="15" viewBox="0 0 15 15"><path d="M6 6 13.5 13.5" stroke="#8a5828" stroke-width="3.2" stroke-linecap="round"/><path d="M6 6 13 13" stroke="#c88a48" stroke-width="1.4" stroke-linecap="round"/><path d="M0.5 4.5 4 0.5c2-0.5 4 0 5 1.5l-2.5 0.5 0.8 1.2-3.2 3z" fill="#8c8c90" stroke="#505058" stroke-width="0.8"/></svg><svg style="position:absolute;left:11px;top:865px" width="16" height="15" viewBox="0 0 16 15"><path d="M10 4 15 0.5" stroke="#9a9aa0" stroke-width="1.8"/><path d="M1 13 4 7 9 3.5 11.5 6 8.5 11z" fill="#d8a058" stroke="#a87030" stroke-width="0.8"/><path d="M3 11 8 5.5M5 12 9.5 7" stroke="#a87030" stroke-width="0.7"/><path d="M0 14.5h12" stroke="#aaa" stroke-width="0.8"/></svg><svg style="position:absolute;left:11px;top:882px" width="16" height="15" viewBox="0 0 16 15"><g stroke="#2a5a5a" stroke-width="1.2" fill="none" stroke-linecap="round"><path d="M5 4 3.5 0.8M8.5 3.5 11.5 1.5M3.5 7 0.8 6.5M3.5 10 0.8 11.5M6 12.5 4.5 14.5M12 6.5 14.5 5.5M12.5 9.5 14.5 10.5M10 12.5 11 14.5"/></g><ellipse cx="8" cy="8.3" rx="3.8" ry="5.4" transform="rotate(-40 8 8.3)" fill="#a8d090" stroke="#3a6a50" stroke-width="1"/><path d="M5.5 6.5 10.5 11" stroke="#e0f0d0" stroke-width="1"/></svg><svg style="position:absolute;left:194px;top:782px" width="17" height="16" viewBox="0 0 17 16"><path d="M2 0.5h5l1 1.5" fill="none" stroke="#e0c070"/><path d="M0.5 2.5h10l-1 8h-9z" fill="#fce0a0" stroke="#c8a060"/><path d="M0.5 2.5v9h4" fill="none" stroke="#1a30c0" stroke-width="1.2"/><rect x="8.5" y="5.5" width="7" height="10" fill="none" stroke="#4a80c0" stroke-width="1" stroke-dasharray="1 1.6"/><g transform="translate(10.5 10) rotate(-45)"><rect x="-2" y="-6.5" width="4" height="12" fill="#f2e4a8" stroke="#1c3c94" stroke-width="1.1"/><path d="M0 -5.5v10" stroke="#1c3c94" stroke-width="0.8" stroke-dasharray="1 1"/></g></svg><svg style="position:absolute;left:194px;top:800px" width="17" height="16" viewBox="0 0 17 16"><path d="M0.5 5 3.5 1c2-0.8 5-0.5 6.5 1.2l-3 0.6-3 3.2z" fill="#8c8c90" stroke="#606068" stroke-width="0.8"/><path d="M5 4.5 7.5 7" stroke="#a06028" stroke-width="1.4"/><rect x="8.5" y="5.5" width="7" height="10" fill="none" stroke="#4a80c0" stroke-width="1" stroke-dasharray="1 1.6"/><g transform="translate(10.5 10) rotate(-45)"><rect x="-2" y="-6.5" width="4" height="12" fill="#f2e4a8" stroke="#1c3c94" stroke-width="1.1"/><path d="M0 -5.5v10" stroke="#1c3c94" stroke-width="0.8" stroke-dasharray="1 1"/></g></svg><svg style="position:absolute;left:194px;top:817px" width="17" height="16" viewBox="0 0 17 16"><g stroke="#1a4a40" stroke-width="1.1" fill="none"><path d="M3 3 1 1M7 2 8.5 0.5M1.5 7 0 8M2.5 10 1 12M9 5 11 5"/></g><ellipse cx="5" cy="6" rx="3.3" ry="4.3" transform="rotate(-40 5 6)" fill="#b8dca0" stroke="#2a5a40" stroke-width="1"/><rect x="8.5" y="5.5" width="7" height="10" fill="none" stroke="#4a80c0" stroke-width="1" stroke-dasharray="1 1.6"/><g transform="translate(10.5 10) rotate(-45)"><rect x="-2" y="-6.5" width="4" height="12" fill="#f2e4a8" stroke="#1c3c94" stroke-width="1.1"/><path d="M0 -5.5v10" stroke="#1c3c94" stroke-width="0.8" stroke-dasharray="1 1"/></g></svg><svg style="position:absolute;left:195px;top:866px" width="16" height="12" viewBox="0 0 16 12"><path d="M0.5 3 4.5 0.5 9 2.5v5l-4 2.5-4.5-2z" fill="#f0a040"/><path d="M6.5 3 10.5 0.5 15 2.5v5l-4 2.5-4.5-2z" fill="#40b0d8"/><path d="M3.5 6 8 3.5 12 5.5v4.5l-4 2-4.5-2z" fill="#90d040"/></svg><svg style="position:absolute;left:195px;top:886px" width="16" height="9" viewBox="0 0 16 9"><circle cx="4" cy="4.5" r="3.6" fill="#f5d030" stroke="#a08010" stroke-width="0.9"/><circle cx="3.3" cy="4.5" r="1.1" fill="#fff"/><path d="M7.5 3.3h8v2.4h-1.5v2h-1.8v-2h-1.2v1.5h-1.8v-1.5h-1.7z" fill="#f5d030" stroke="#a08010" stroke-width="0.8"/></svg><svg style="position:absolute;left:393px;top:595px" width="14" height="14" viewBox="0 0 14 14"><rect x="0.75" y="0.75" width="12.5" height="9.5" rx="1.5" fill="#fff" stroke="#2e5ea8" stroke-width="1.5"/><path d="M3 4h5.5M3 6.5h7" stroke="#2e5ea8" stroke-width="1"/><path d="M5.5 11h3v1.2h3.5v1.3h-10v-1.3h3.5z" fill="#2e5ea8"/></svg><svg style="position:absolute;left:465px;top:596px" width="16" height="12" viewBox="0 0 16 12"><path d="M1.5 0 v5 M0.5 0.8 h1" stroke="#3c4a66" stroke-width="1" fill="none"/><rect x="4.5" y="0.5" width="2.2" height="4.2" rx="1" fill="none" stroke="#3c4a66" stroke-width="0.9"/><path d="M9.5 0 v5 M8.5 0.8 h1" stroke="#3c4a66" stroke-width="1" fill="none"/><rect x="12.5" y="0.5" width="2.2" height="4.2" rx="1" fill="none" stroke="#3c4a66" stroke-width="0.9"/><rect x="0.5" y="6.5" width="2.2" height="4.2" rx="1" fill="none" stroke="#3c4a66" stroke-width="0.9"/><path d="M5.5 6 v5 M4.5 6.8 h1" stroke="#3c4a66" stroke-width="1" fill="none"/><rect x="8.5" y="6.5" width="2.2" height="4.2" rx="1" fill="none" stroke="#3c4a66" stroke-width="0.9"/><path d="M13.5 6 v5 M12.5 6.8 h1" stroke="#3c4a66" stroke-width="1" fill="none"/></svg><svg style="position:absolute;left:946px;top:596px" width="16" height="12" viewBox="0 0 16 12"><path d="M1.5 0 v5 M0.5 0.8 h1" stroke="#3c4a66" stroke-width="1" fill="none"/><rect x="4.5" y="0.5" width="2.2" height="4.2" rx="1" fill="none" stroke="#3c4a66" stroke-width="0.9"/><path d="M9.5 0 v5 M8.5 0.8 h1" stroke="#3c4a66" stroke-width="1" fill="none"/><rect x="12.5" y="0.5" width="2.2" height="4.2" rx="1" fill="none" stroke="#3c4a66" stroke-width="0.9"/><rect x="0.5" y="6.5" width="2.2" height="4.2" rx="1" fill="none" stroke="#3c4a66" stroke-width="0.9"/><path d="M5.5 6 v5 M4.5 6.8 h1" stroke="#3c4a66" stroke-width="1" fill="none"/><rect x="8.5" y="6.5" width="2.2" height="4.2" rx="1" fill="none" stroke="#3c4a66" stroke-width="0.9"/><path d="M13.5 6 v5 M12.5 6.8 h1" stroke="#3c4a66" stroke-width="1" fill="none"/></svg><svg style="position:absolute;left:542px;top:597px" width="16" height="12" viewBox="0 0 16 12"><rect x="0.5" y="1" width="13" height="8" fill="#e0e4ea" stroke="#8890a0" stroke-width="0.8"/><rect x="1" y="3" width="7" height="3" fill="#48b848"/><circle cx="11.5" cy="8.5" r="3.5" fill="#3aa84a" stroke="#1e8030" stroke-width="0.6"/><path d="M10.3 6.7v3.6l2.8-1.8z" fill="#fff"/></svg><svg style="position:absolute;left:616px;top:594px" width="15" height="16" viewBox="0 0 15 16"><rect x="0.5" y="0.5" width="9" height="14.5" fill="#f8f8f8" stroke="#b0b0b8"/><circle cx="5" cy="5" r="3" fill="#e02828"/><rect x="1" y="9" width="7" height="6" fill="#e02828"/><path d="M3 10.5 6 13.5M6 10.5 3 13.5" stroke="#fff" stroke-width="1"/><path d="M10 1c3 0 4 2 3 4s0 5 1 9h-4" fill="none" stroke="#8898b8" stroke-width="1"/></svg><svg style="position:absolute;left:696px;top:595px" width="15" height="15" viewBox="0 0 15 15"><circle cx="7.5" cy="7.5" r="6.8" fill="#a8c0e0" stroke="#5a7ab0" stroke-width="1"/><circle cx="7.5" cy="7.5" r="5" fill="#6a90c8"/><path d="M6 4v7l5-3.5z" fill="#fff"/></svg><svg style="position:absolute;left:790px;top:594px" width="13" height="16" viewBox="0 0 13 16"><path d="M0.5 1.5h11v11l-3 3h-8z" fill="#fbfbf4" stroke="#a89868"/><path d="M1 1h10" stroke="#555" stroke-width="1.4" stroke-dasharray="1 1"/><path d="M8.5 15.5v-3h3z" fill="#70c050"/><path d="M6.5 4.5v6c0 1.5-1 2-2 2s-1.5-.5-1.8-1.2" fill="none" stroke="#2e5ea8" stroke-width="1.6"/></svg><svg style="position:absolute;left:880px;top:596px" width="17" height="15" viewBox="0 0 17 15"><path d="M1 12 10 2.5 14 1 13 5 4 14z" fill="#f0c860" stroke="#b88a2a"/><path d="M3 9.5 6 12.5 8.5 10 5.5 7z" fill="#a0a0a8" stroke="#777"/><path d="M0.5 14.5 3 9.5 5.5 12z" fill="#fff8d8"/><circle cx="11.5" cy="3.5" r="0.8" fill="#2050a0"/></svg><svg style="position:absolute;left:1077px;top:595px" width="15" height="15" viewBox="0 0 15 15"><rect x="0.75" y="0.75" width="11.5" height="9.5" rx="1.5" fill="#fff" stroke="#2e5ea8" stroke-width="1.5"/><path d="M3 4h5M3 6.5h4" stroke="#2e5ea8" stroke-width="1"/><path d="M2 12.5h7" stroke="#2e5ea8" stroke-width="1.5"/><ellipse cx="11" cy="10.5" rx="3" ry="3.8" fill="#a8d090" stroke="#2a6a50" stroke-width="0.9"/><path d="M8 7 7 6M8 10h-1.5M8.5 13l-1 1.2" stroke="#2a6a50" stroke-width="0.9"/></svg><svg style="position:absolute;left:200px;top:0px" width="6" height="5" viewBox="0 0 6 5"><path d="M4.5 0v1.6c0 1.2-1 1.6-3.5 1.6" fill="none" stroke="#1a1a2a" stroke-width="1.2"/></svg><svg style="position:absolute;left:301px;top:0px" width="6" height="5" viewBox="0 0 6 5"><path d="M4.5 0v1.6c0 1.2-1 1.6-3.5 1.6" fill="none" stroke="#1a1a2a" stroke-width="1.2"/></svg><svg style="position:absolute;left:367px;top:0px" width="6" height="5" viewBox="0 0 6 5"><path d="M4.5 0v1.6c0 1.2-1 1.6-3.5 1.6" fill="none" stroke="#1a1a2a" stroke-width="1.2"/></svg><div style="position:absolute;left:646px;top:0px;width:1.3px;height:3.5px;background:#2a1a3a"></div><svg style="position:absolute;left:4px;top:705px" width="7" height="10" viewBox="0 0 7 10"><path d="M5.5 1 2 4.5 5.5 8" fill="none" stroke="#505050" stroke-width="2"/></svg><svg style="position:absolute;left:368px;top:705px" width="7" height="10" viewBox="0 0 7 10"><path d="M1 1 4.5 4.5 1 8" fill="none" stroke="#505050" stroke-width="2"/></svg><div style="position:absolute;left:588px;top:363px;width:7px;height:13px;border:1px solid #a0a0a0;box-sizing:border-box"></div>
</body></html>
